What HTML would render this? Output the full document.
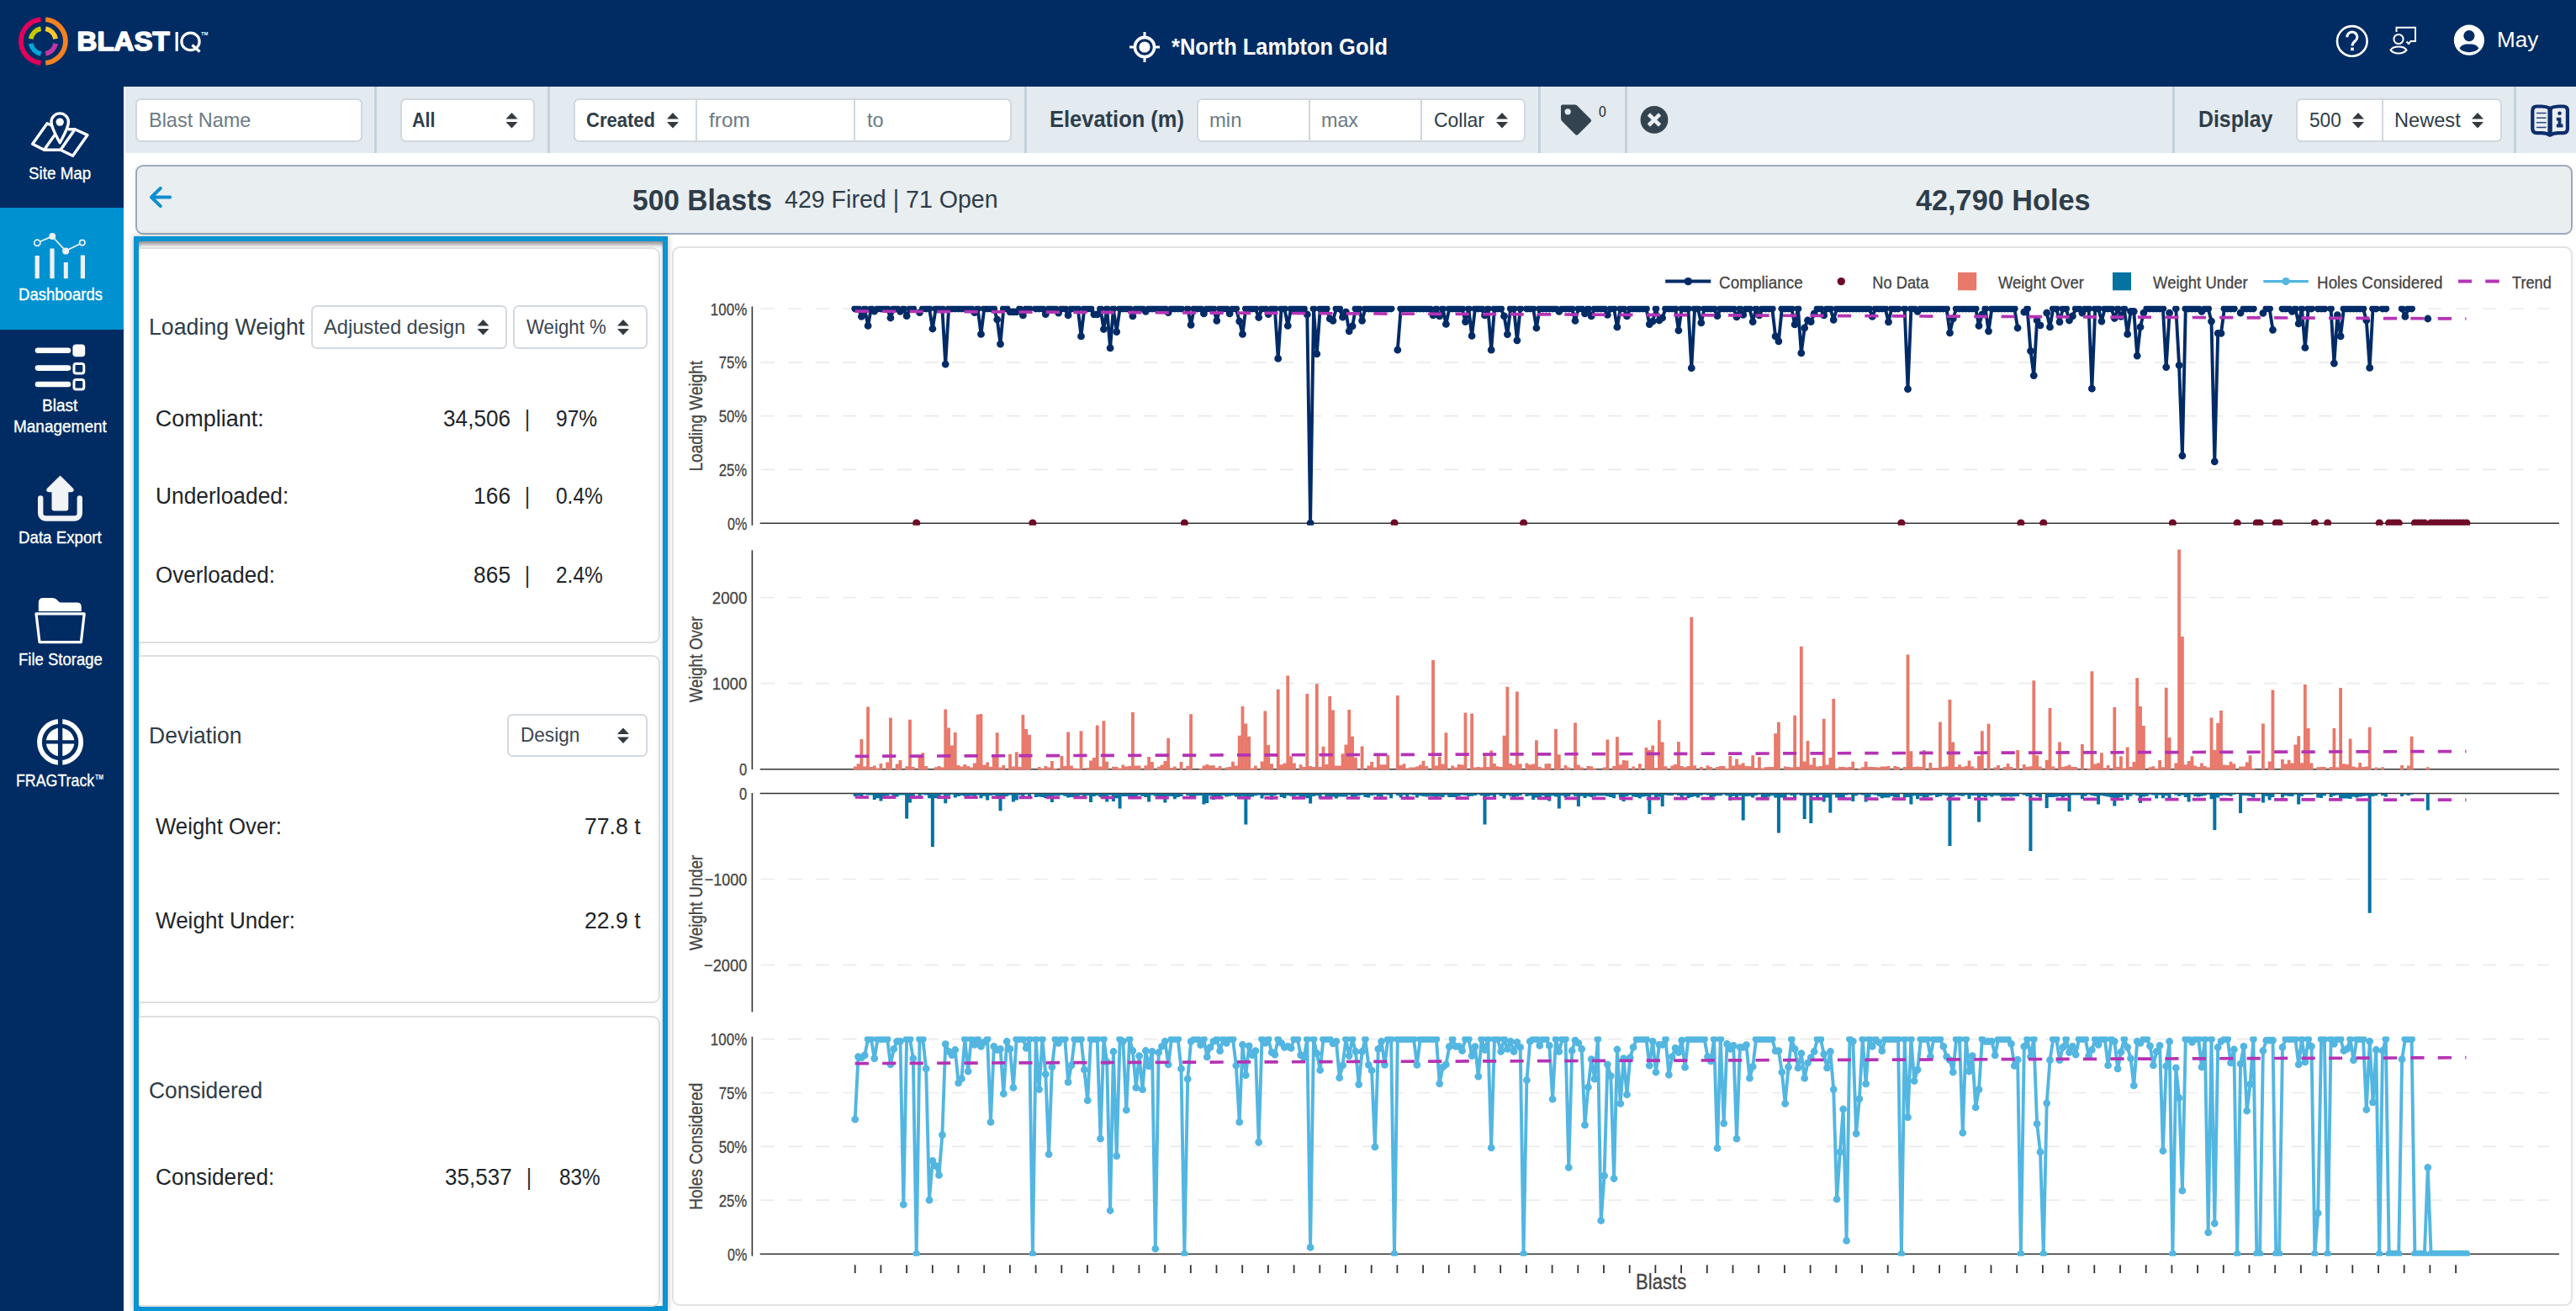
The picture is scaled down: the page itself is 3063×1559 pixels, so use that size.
<!DOCTYPE html>
<html lang="en"><head><meta charset="utf-8"><title>BlastIQ - Dashboards</title>
<style>
html,body{margin:0;padding:0}
body{width:3063px;height:1559px;overflow:hidden;position:relative;background:#fff;font-family:"Liberation Sans",sans-serif}
.abs{position:absolute}
.t{position:absolute;white-space:nowrap;line-height:1;transform-origin:0 0;display:block}
#hdr{position:absolute;left:0;top:0;width:3063px;height:102.600px;background:#002b63}
#side{position:absolute;left:0;top:102px;width:147px;height:1457px;background:#002b63}
#fbar{position:absolute;left:149px;top:102.600px;width:2914px;height:79.400px;background:#e3eaf0}
.sep{position:absolute;top:102.600px;width:3px;height:79.400px;background:#c3d2db}
.inp{position:absolute;top:116.800px;height:52.200px;box-sizing:border-box;background:#fff;border:2px solid #d0d7de;border-radius:6.500px}
.vdiv{position:absolute;top:118px;height:50px;width:2px;background:#d0d7de}
#sum{position:absolute;left:161px;top:196px;width:2898px;height:82.500px;box-sizing:border-box;background:#e9eef1;border:2px solid #9aaabd;border-radius:9px}
#selp{position:absolute;left:159px;top:281.300px;width:635px;height:1277.700px;box-sizing:border-box;border:6px solid #0993d3;background:#fff;box-shadow:inset 0 7px 5px -3px rgba(0,0,0,.42), inset 4px 0 4px -3px rgba(0,0,0,.14), inset -4px 0 4px -3px rgba(0,0,0,.14), 0 0 7px rgba(0,0,0,.28)}
.card{position:absolute;box-sizing:border-box;background:#fff;border:2px solid #dfdfdf;border-left:0;border-radius:3px 9px 9px 3px}
.sel{position:absolute;box-sizing:border-box;background:#fff;border:2px solid #d3d9df;border-radius:6.500px}
#chart{position:absolute;left:799.200px;top:293.300px;width:2260px;height:1260.200px;box-sizing:border-box;background:#fff;border:2px solid #e2e2e2;border-radius:9px}
</style></head>
<body>
<div id="hdr">
<svg class="abs" style="left:0;top:0" width="300" height="102" viewBox="0 0 300 102">
<g fill="none" stroke-width="5.8">
<path d="M48.6 23.1A26 26 0 0 0 48.6 74.9" stroke="#e2005a"/>
<path d="M54.2 23.1A26 26 0 0 1 54.2 74.9" stroke="#f58220"/>
<path d="M48.6 34.2A15 15 0 0 0 36.7 46.2" stroke="#c6c800"/>
<path d="M54.2 34.2A15 15 0 0 1 66.1 46.2" stroke="#fdc82f"/>
<path d="M36.7 51.8A15 15 0 0 0 48.6 63.8" stroke="#00a5d9"/>
<path d="M66.1 51.8A15 15 0 0 1 54.2 63.8" stroke="#c137a2"/>
</g>
<text x="91.6" y="60.1" font-family="Liberation Sans, sans-serif" font-weight="700" font-size="31.300" fill="#fff" stroke="#fff" stroke-width="1.600" stroke-linejoin="round" textLength="110" lengthAdjust="spacingAndGlyphs">BLAST</text>
<g fill="none" stroke="#fff" stroke-width="3.2">
<path d="M210.2 38V60.8"/>
<ellipse cx="226.5" cy="49.4" rx="10.6" ry="10.2"/>
<path d="M228.5 53.5L237.5 61.5" stroke-width="3.4"/>
</g>
<text x="239.3" y="42" font-family="Liberation Sans, sans-serif" font-weight="700" font-size="5.5" fill="#fff">TM</text>
</svg>
<svg class="abs" style="left:1336px;top:30px" width="50" height="52" viewBox="1336 30 50 52">
<circle cx="1361" cy="56" r="11.6" fill="none" stroke="#fff" stroke-width="3.6"/>
<circle cx="1361" cy="56" r="6.6" fill="#fff"/>
<path d="M1361 38v7M1361 67v7M1343 56h7M1372 56h7" stroke="#fff" stroke-width="3"/>
</svg>
<span class="t" style="left:1393.4px;top:42.8px;font-size:27px;color:#fff;font-weight:700;transform:scaleX(0.9415);">*North Lambton Gold</span>
<svg class="abs" style="left:2770px;top:20px" width="120" height="60" viewBox="2770 20 120 60">
<circle cx="2796.8" cy="48.9" r="17.8" fill="none" stroke="#fff" stroke-width="2.6"/>
<path d="M2790.8 44.2a6 6 0 1 1 9.6 4.6c-2.4 1.8-3.4 2.8-3.4 5.6" fill="none" stroke="#fff" stroke-width="3"/>
<rect x="2795.2" y="56.6" width="3.6" height="3.6" fill="#fff"/>
<g fill="none" stroke="#fff" stroke-width="2">
<path d="M2849.5 38V32.8H2872V49H2866.5L2864 52L2861.5 49.5"/>
<circle cx="2852" cy="46.5" r="5.6"/>
<path d="M2842.5 59.5C2845 55.5 2849 55.5 2852 55.5C2855 55.5 2859 55.5 2861.5 59.5C2859 62.5 2856 63.5 2852 63.5C2848 63.5 2845 62.5 2842.5 59.5Z"/>
</g>
</svg>
<svg class="abs" style="left:2915px;top:27px" width="44" height="44" viewBox="2915 27 44 44">
<circle cx="2935.9" cy="47.7" r="18.1" fill="#fff"/>
<circle cx="2935.9" cy="42.6" r="6.6" fill="#002b63"/>
<path d="M2924.4 57.6C2927 52.8 2931.5 52.6 2935.9 52.6C2940.3 52.6 2944.8 52.8 2947.4 57.6C2944.5 61 2940.5 62.2 2935.9 62.2C2931.3 62.2 2927.3 61 2924.4 57.6Z" fill="#002b63"/>
</svg>
<span class="t" style="left:2968.7px;top:34.4px;font-size:26.5px;color:#fff;transform:scaleX(0.9847);">May</span>
</div>
<div id="side">
<div class="abs" style="left:0px;top:145px;width:147px;height:145px;background:#0091d1;"></div>
</div>
<svg class="abs" style="left:0;top:102px" width="148" height="900" viewBox="0 102 148 900">
<!-- site map -->
<g fill="none" stroke="#fff" stroke-width="3.4" stroke-linejoin="round" stroke-linecap="round">
<path d="M61.5 149.2L56.1 146.8L38.700 171.3L52.5 178.2H72L86.6 185.3L104 160.6L89.1 153.8H81.5"/>
<path d="M52.5 178.2L65 160.500M72 178.2L89.1 153.8"/>
<path d="M71.2 169.800C66 160 61 152 61 145.100A10.2 10.2 0 0 1 81.4 145.100C81.400 152 76.400 160 71.2 169.800Z" fill="#002b63"/>
</g>
<circle cx="71.2" cy="145.100" r="4.700" fill="#fff"/>
<!-- dashboards -->
<g fill="#eef1f4">
<rect x="41.6" y="304" width="5.2" height="27.2"/>
<rect x="59.4" y="295.5" width="5.2" height="35.7"/>
<rect x="75.8" y="312" width="5" height="19.2"/>
<rect x="95.8" y="303.5" width="5.2" height="27.7"/>
<circle cx="62.3" cy="281" r="3.9"/>
<circle cx="78.2" cy="298.6" r="4.1"/>
</g>
<g fill="none" stroke="#eef1f4" stroke-width="1.7">
<circle cx="44.3" cy="288.8" r="3.6"/>
<circle cx="97.8" cy="288.6" r="3.2"/>
<path d="M47.6 287.2L59 282.4M64.8 284L75.6 295.6M81.8 296.6L94.8 290.2"/>
</g>
<!-- blast management -->
<g stroke="#fff" stroke-width="6.6" stroke-linecap="round">
<path d="M45 416.8H81M45 437.6H81M45 457H81"/>
</g>
<rect x="86.4" y="409.4" width="14.8" height="14.9" rx="4" fill="#fff"/>
<rect x="88" y="432.6" width="11.8" height="11.4" rx="2.6" fill="none" stroke="#fff" stroke-width="3"/>
<rect x="88" y="451.6" width="11.8" height="11.4" rx="2.6" fill="none" stroke="#fff" stroke-width="3"/>
<!-- data export -->
<path d="M48.2 592.5V610.5A6 6 0 0 0 54.2 616.5H88.8A6 6 0 0 0 94.8 610.5V592.5" fill="none" stroke="#f1f3f5" stroke-width="6.4" stroke-linecap="round"/>
<path d="M71.6 566.6L86.6 581.6Q87.8 584.4 85 584.4H80.5V604.5Q80.5 606.6 78.4 606.6H64.4Q62.3 606.6 62.3 604.5V584.4H58Q55 584.4 56.4 581.6Z" fill="#f1f3f5" stroke="#f1f3f5" stroke-width="1.6" stroke-linejoin="round"/>
<!-- file storage -->
<path d="M45.8 726.9V716.5Q45.8 710.9 51.4 710.9H62.5Q66 710.9 68 713.5Q70 716.6 73.5 716.6H91.5Q96.8 716.6 96.8 722V726.9Z" fill="#fff"/>
<path d="M43 729.8H100.2L96.4 763.6H47Z" fill="none" stroke="#fff" stroke-width="3.2" stroke-linejoin="round"/>
<!-- fragtrack -->
<circle cx="71.6" cy="882.4" r="24.6" fill="none" stroke="#fff" stroke-width="5.8"/>
<circle cx="71.6" cy="882.4" r="16.8" fill="#fff"/>
<path d="M71.6 852V913" stroke="#002b63" stroke-width="5.4"/>
<path d="M52 882.4H91" stroke="#002b63" stroke-width="4.4"/>
</svg>
<span class="t" style="left:34.2px;top:194.9px;font-size:21px;color:#fff;transform:scaleX(0.8965);-webkit-text-stroke:.35px #fff;">Site Map</span>
<span class="t" style="left:21.5px;top:339.0px;font-size:21px;color:#fff;transform:scaleX(0.8831);-webkit-text-stroke:.35px #fff;">Dashboards</span>
<span class="t" style="left:50.3px;top:471.4px;font-size:21px;color:#fff;transform:scaleX(0.9060);-webkit-text-stroke:.35px #fff;">Blast</span>
<span class="t" style="left:16.0px;top:495.9px;font-size:21px;color:#fff;transform:scaleX(0.9039);-webkit-text-stroke:.35px #fff;">Management</span>
<span class="t" style="left:22.2px;top:628.2px;font-size:21px;color:#fff;transform:scaleX(0.8910);-webkit-text-stroke:.35px #fff;">Data Export</span>
<span class="t" style="left:21.5px;top:773.0px;font-size:21px;color:#fff;transform:scaleX(0.8814);-webkit-text-stroke:.35px #fff;">File Storage</span>
<span class="t" style="left:19.4px;top:917.4px;font-size:21px;color:#fff;transform:scaleX(0.8468);-webkit-text-stroke:.35px #fff;">FRAGTrack</span>
<span class="t" style="left:112.8px;top:920.3px;font-size:8.5px;color:#fff;font-weight:700;transform:scaleX(0.8148);">TM</span>
<div id="fbar"></div>
<div class="sep" style="left:445px"></div>
<div class="sep" style="left:651px"></div>
<div class="sep" style="left:1217.5px"></div>
<div class="sep" style="left:1829px"></div>
<div class="sep" style="left:1932px"></div>
<div class="sep" style="left:2583px"></div>
<div class="sep" style="left:2989px"></div>
<div class="inp" style="left:161.4px;width:269.4px;"></div>
<span class="t" style="left:177.2px;top:130.9px;font-size:24px;color:#6c7a86;transform:scaleX(0.9779);">Blast Name</span>
<div class="inp" style="left:475.6px;width:160.79999999999995px;"></div>
<span class="t" style="left:490.3px;top:130.9px;font-size:24px;color:#2e3d49;font-weight:700;transform:scaleX(0.8935);">All</span>
<div class="inp" style="left:681.6px;width:521.6px;"></div>
<div class="vdiv" style="left:827px"></div><div class="vdiv" style="left:1014.8px"></div>
<span class="t" style="left:696.8px;top:130.9px;font-size:24px;color:#2e3d49;font-weight:700;transform:scaleX(0.9175);">Created</span>
<span class="t" style="left:843.0px;top:130.9px;font-size:24px;color:#6c7a86;transform:scaleX(1.0166);">from</span>
<span class="t" style="left:1030.6px;top:130.9px;font-size:24px;color:#6c7a86;transform:scaleX(0.9792);">to</span>
<span class="t" style="left:1248.4px;top:128.8px;font-size:27px;color:#2e3d49;font-weight:700;transform:scaleX(0.9438);">Elevation (m)</span>
<div class="inp" style="left:1422.6px;width:391.8000000000002px;"></div>
<div class="vdiv" style="left:1555.8px"></div><div class="vdiv" style="left:1689px"></div>
<span class="t" style="left:1438.0px;top:130.9px;font-size:24px;color:#6c7a86;transform:scaleX(0.9929);">min</span>
<span class="t" style="left:1571.0px;top:130.9px;font-size:24px;color:#6c7a86;transform:scaleX(0.9704);">max</span>
<span class="t" style="left:1704.7px;top:130.9px;font-size:24px;color:#2e3d49;transform:scaleX(0.9571);">Collar</span>
<span class="t" style="left:2613.6px;top:128.8px;font-size:27px;color:#2e3d49;font-weight:700;transform:scaleX(0.9194);">Display</span>
<div class="inp" style="left:2729.7px;width:245.30000000000018px;"></div>
<div class="vdiv" style="left:2832px"></div>
<span class="t" style="left:2745.6px;top:130.9px;font-size:24px;color:#2e3d49;transform:scaleX(0.9440);">500</span>
<span class="t" style="left:2847.0px;top:130.9px;font-size:24px;color:#2e3d49;transform:scaleX(0.9834);">Newest</span>
<span class="t" style="left:1901.0px;top:125.0px;font-size:17.5px;color:#212529;transform:scaleX(0.9041);">0</span>
<svg class="abs" style="left:148px;top:102px" width="2915" height="80" viewBox="148 102 2915 80">
<path d="M601.5 141.6L608.5 134.1L615.5 141.6ZM601.5 145.1L608.5 152.6L615.5 145.1Z" fill="#343a40"/><path d="M793.0 141.6L800.0 134.1L807.0 141.6ZM793.0 145.1L800.0 152.6L807.0 145.1Z" fill="#343a40"/><path d="M1779.0 141.6L1786.0 134.1L1793.0 141.6ZM1779.0 145.1L1786.0 152.6L1793.0 145.1Z" fill="#343a40"/><path d="M2797.0 141.6L2804.0 134.1L2811.0 141.6ZM2797.0 145.1L2804.0 152.6L2811.0 145.1Z" fill="#343a40"/><path d="M2939.0 141.6L2946.0 134.1L2953.0 141.6ZM2939.0 145.1L2946.0 152.6L2953.0 145.1Z" fill="#343a40"/>
<path d="M1856 126.5Q1856 124.5 1858 124.5H1872.5Q1874.2 124.5 1875.4 125.7L1891.4 141.7Q1893 143.3 1891.4 144.9L1876.4 159.9Q1874.8 161.5 1873.2 159.9L1857.2 143.9Q1856 142.7 1856 141Z" fill="#33434f"/>
<circle cx="1864.2" cy="132.8" r="3.6" fill="#e3eaf0"/>
<circle cx="1967" cy="142.4" r="16.4" fill="#33434f"/>
<path d="M1960.4 135.8L1973.6 149M1973.6 135.8L1960.4 149" stroke="#e9eef2" stroke-width="4.6"/>
<path d="M3011.3 131.5Q3011.3 126.5 3016.3 126.5H3022Q3028 126.5 3032.1 128.800Q3036.2 126.5 3042.2 126.5H3047.9Q3052.9 126.5 3052.9 131.5V153.100Q3052.9 158.100 3047.9 158.100H3042.2Q3036.2 158.100 3032.1 160.800Q3028 158.100 3022 158.100H3016.3Q3011.3 158.100 3011.3 153.100Z" fill="#e9eef2" stroke="#0d2d6b" stroke-width="4.2" stroke-linejoin="round"/>
<path d="M3032.1 128V161.500" stroke="#0d2d6b" stroke-width="5.400"/>
<path d="M3016.5 134.5H3027.1M3016.500 140.2H3027.100M3016.5 145.700H3027.1M3016.500 151.500H3027.100" stroke="#2a4680" stroke-width="1.500" stroke-linecap="round"/>
<circle cx="3043.5" cy="134.700" r="2.300" fill="#0d2d6b"/>
<path d="M3040.5 140.300H3044.8V148.200H3046.900V150.800H3040.500V148.200H3042.200V142.900H3040.500Z" fill="#0d2d6b" stroke="#0d2d6b" stroke-width="1.2" stroke-linejoin="round"/>
</svg>
<div id="sum"></div>
<svg class="abs" style="left:170px;top:215px" width="44" height="40" viewBox="170 215 44 40">
<path d="M202.200 234.500H180.200M190.800 223.900L180 234.500L190.800 245.100" fill="none" stroke="#0d8fd0" stroke-width="4" stroke-linecap="round" stroke-linejoin="round"/></svg>
<span class="t" style="left:751.5px;top:220.2px;font-size:35px;color:#2e3d49;font-weight:700;transform:scaleX(0.9586);">500 Blasts</span>
<span class="t" style="left:932.7px;top:222.2px;font-size:30px;color:#2e3d49;transform:scaleX(0.9523);">429 Fired | 71 Open</span>
<span class="t" style="left:2277.5px;top:220.2px;font-size:35px;color:#2e3d49;font-weight:700;transform:scaleX(0.9788);">42,790 Holes</span>
<div id="selp"></div>
<div class="card" style="left:165px;top:293.5px;width:620px;height:471px"></div>
<div class="card" style="left:165px;top:779px;width:620px;height:413.500px"></div>
<div class="card" style="left:165px;top:1208px;width:620px;height:345.500px"></div>
<span class="t" style="left:176.9px;top:375.1px;font-size:28px;color:#2e3d49;transform:scaleX(0.9543);">Loading Weight</span>
<div class="sel" style="left:369.8px;top:363.4px;width:232.99999999999994px;height:51.200000000000045px"></div>
<span class="t" style="left:385.2px;top:376.5px;font-size:24px;color:#3a4650;transform:scaleX(0.9854);">Adjusted design</span>
<div class="sel" style="left:610.4px;top:363.4px;width:159.20000000000005px;height:51.200000000000045px"></div>
<span class="t" style="left:626.0px;top:376.5px;font-size:24px;color:#3a4650;transform:scaleX(0.9270);">Weight %</span>
<span class="t" style="left:184.7px;top:484.5px;font-size:27px;color:#212529;">Compliant:</span>
<span class="t" style="left:526.5px;top:484.5px;font-size:27px;color:#212529;transform:scaleX(0.9699);">34,506</span>
<span class="t" style="left:623.6px;top:484.5px;font-size:27px;color:#212529;transform:scaleX(0.8555);">|</span>
<span class="t" style="left:660.8px;top:484.5px;font-size:27px;color:#212529;transform:scaleX(0.9104);">97%</span>
<span class="t" style="left:184.7px;top:577.4px;font-size:27px;color:#212529;transform:scaleX(0.9764);">Underloaded:</span>
<span class="t" style="left:562.5px;top:577.4px;font-size:27px;color:#212529;transform:scaleX(0.9789);">166</span>
<span class="t" style="left:623.6px;top:577.4px;font-size:27px;color:#212529;transform:scaleX(0.8555);">|</span>
<span class="t" style="left:660.8px;top:577.4px;font-size:27px;color:#212529;transform:scaleX(0.9067);">0.4%</span>
<span class="t" style="left:184.7px;top:670.9px;font-size:27px;color:#212529;transform:scaleX(0.9661);">Overloaded:</span>
<span class="t" style="left:562.5px;top:670.9px;font-size:27px;color:#212529;transform:scaleX(0.9789);">865</span>
<span class="t" style="left:623.6px;top:670.9px;font-size:27px;color:#212529;transform:scaleX(0.8555);">|</span>
<span class="t" style="left:660.8px;top:670.9px;font-size:27px;color:#212529;transform:scaleX(0.9067);">2.4%</span>
<span class="t" style="left:176.8px;top:860.6px;font-size:28px;color:#2e3d49;transform:scaleX(0.9466);">Deviation</span>
<div class="sel" style="left:603px;top:849px;width:166.60000000000002px;height:51.39999999999998px"></div>
<span class="t" style="left:619.2px;top:862.3px;font-size:24px;color:#3a4650;transform:scaleX(0.9410);">Design</span>
<span class="t" style="left:185.4px;top:970.2px;font-size:27px;color:#212529;transform:scaleX(0.9551);">Weight Over:</span>
<span class="t" style="left:695.0px;top:970.2px;font-size:27px;color:#212529;transform:scaleX(0.9859);">77.8 t</span>
<span class="t" style="left:185.4px;top:1081.7px;font-size:27px;color:#212529;transform:scaleX(0.9652);">Weight Under:</span>
<span class="t" style="left:695.0px;top:1081.7px;font-size:27px;color:#212529;transform:scaleX(0.9859);">22.9 t</span>
<span class="t" style="left:176.7px;top:1282.7px;font-size:28px;color:#2e3d49;transform:scaleX(0.9434);">Considered</span>
<span class="t" style="left:185.2px;top:1386.7px;font-size:27px;color:#212529;transform:scaleX(0.9705);">Considered:</span>
<span class="t" style="left:528.6px;top:1386.7px;font-size:27px;color:#212529;transform:scaleX(0.9639);">35,537</span>
<span class="t" style="left:625.5px;top:1386.7px;font-size:27px;color:#212529;transform:scaleX(0.8555);">|</span>
<span class="t" style="left:665.0px;top:1386.7px;font-size:27px;color:#212529;transform:scaleX(0.9012);">83%</span>
<svg class="abs" style="left:165px;top:290px" width="625" height="700" viewBox="165 290 625 700">
<path d="M567.5 387.4L574.5 379.9L581.5 387.4ZM567.5 390.9L574.5 398.4L581.5 390.9Z" fill="#343a40"/><path d="M734.0 387.4L741.0 379.9L748.0 387.4ZM734.0 390.9L741.0 398.4L748.0 390.9Z" fill="#343a40"/><path d="M734.0 873.0L741.0 865.5L748.0 873.0ZM734.0 876.5L741.0 884.0L748.0 876.5Z" fill="#343a40"/></svg>
<div id="chart"></div>
<svg id="chsvg" class="abs" style="left:800px;top:294px" width="2258" height="1258" viewBox="800 294 2258 1258" font-family="Liberation Sans, sans-serif"><style>#chsvg text{stroke:#444;stroke-width:.3px}</style>
<defs><clipPath id="c1"><rect x="900" y="363.8" width="2150" height="260.9"/></clipPath><clipPath id="c4"><rect x="900" y="1232.5" width="2150" height="261.2"/></clipPath></defs>
<path d="M904.6 367.0H3031M904.6 430.8H3031M904.6 494.6H3031M904.6 558.3H3031M904.6 710.5H3031M904.6 812.6H3031M904.6 1045.5H3031M904.6 1147.6H3031M904.6 1235.7H3031M904.6 1299.5H3031M904.6 1363.4H3031M904.6 1427.2H3031" stroke="#ebebeb" stroke-width="1.700" stroke-dasharray="16.4 16.1" fill="none"/>
<path d="M903.7 622.3H3043M903.7 914.8H3043M903.7 943.6H3043M903.7 1491.3H3043" stroke="#333" stroke-width="1.500" fill="none"/>
<path d="M894.4 364.4V624.7M894.4 654.2V915M894.4 943V1203.5M894.4 1232.8V1493.7" stroke="#333" stroke-width="1.600" fill="none"/>
<path d="M1016.7 1504.3V1514M1047.4 1504.3V1514M1078.1 1504.3V1514M1108.8 1504.3V1514M1139.5 1504.3V1514M1170.2 1504.3V1514M1200.9 1504.3V1514M1231.6 1504.3V1514M1262.3 1504.3V1514M1293.0 1504.3V1514M1323.7 1504.3V1514M1354.4 1504.3V1514M1385.1 1504.3V1514M1415.8 1504.3V1514M1446.5 1504.3V1514M1477.2 1504.3V1514M1507.9 1504.3V1514M1538.6 1504.3V1514M1569.3 1504.3V1514M1600.0 1504.3V1514M1630.7 1504.3V1514M1661.4 1504.3V1514M1692.1 1504.3V1514M1722.8 1504.3V1514M1753.5 1504.3V1514M1784.2 1504.3V1514M1814.9 1504.3V1514M1845.6 1504.3V1514M1876.3 1504.3V1514M1907.0 1504.3V1514M1937.7 1504.3V1514M1968.4 1504.3V1514M1999.1 1504.3V1514M2029.8 1504.3V1514M2060.5 1504.3V1514M2091.2 1504.3V1514M2121.9 1504.3V1514M2152.6 1504.3V1514M2183.3 1504.3V1514M2214.0 1504.3V1514M2244.7 1504.3V1514M2275.4 1504.3V1514M2306.1 1504.3V1514M2336.8 1504.3V1514M2367.5 1504.3V1514M2398.2 1504.3V1514M2428.9 1504.3V1514M2459.6 1504.3V1514M2490.3 1504.3V1514M2521.0 1504.3V1514M2551.7 1504.3V1514M2582.4 1504.3V1514M2613.1 1504.3V1514M2643.8 1504.3V1514M2674.5 1504.3V1514M2705.2 1504.3V1514M2735.9 1504.3V1514M2766.6 1504.3V1514M2797.3 1504.3V1514M2828.0 1504.3V1514M2858.7 1504.3V1514M2889.4 1504.3V1514M2920.1 1504.3V1514" stroke="#333" stroke-width="1.800" fill="none"/>
<text x="844.8" y="374.6" font-size="21" fill="#444"  textLength="43.5" lengthAdjust="spacingAndGlyphs" >100%</text>
<text x="844.8" y="1243.3" font-size="21" fill="#444"  textLength="43.5" lengthAdjust="spacingAndGlyphs" >100%</text>
<text x="854.7" y="438.4" font-size="21" fill="#444"  textLength="33.6" lengthAdjust="spacingAndGlyphs" >75%</text>
<text x="854.7" y="1307.1" font-size="21" fill="#444"  textLength="33.6" lengthAdjust="spacingAndGlyphs" >75%</text>
<text x="854.7" y="502.2" font-size="21" fill="#444"  textLength="33.6" lengthAdjust="spacingAndGlyphs" >50%</text>
<text x="854.7" y="1371.0" font-size="21" fill="#444"  textLength="33.6" lengthAdjust="spacingAndGlyphs" >50%</text>
<text x="854.7" y="565.9" font-size="21" fill="#444"  textLength="33.6" lengthAdjust="spacingAndGlyphs" >25%</text>
<text x="854.7" y="1434.8" font-size="21" fill="#444"  textLength="33.6" lengthAdjust="spacingAndGlyphs" >25%</text>
<text x="864.9" y="629.7" font-size="21" fill="#444"  textLength="23.4" lengthAdjust="spacingAndGlyphs" >0%</text>
<text x="864.9" y="1498.7" font-size="21" fill="#444"  textLength="23.4" lengthAdjust="spacingAndGlyphs" >0%</text>
<text x="846.8" y="718.1" font-size="21" fill="#444"  textLength="41.5" lengthAdjust="spacingAndGlyphs" >2000</text>
<text x="846.8" y="820.2" font-size="21" fill="#444"  textLength="41.5" lengthAdjust="spacingAndGlyphs" >1000</text>
<text x="879.1" y="922.2" font-size="21" fill="#444"  textLength="9.2" lengthAdjust="spacingAndGlyphs" >0</text>
<text x="879.1" y="951.0" font-size="21" fill="#444"  textLength="9.2" lengthAdjust="spacingAndGlyphs" >0</text>
<text x="837.7" y="1053.1" font-size="21" fill="#444"  textLength="50.6" lengthAdjust="spacingAndGlyphs" >−1000</text>
<text x="837.0" y="1155.2" font-size="21" fill="#444"  textLength="51.3" lengthAdjust="spacingAndGlyphs" >−2000</text>
<text x="835.3" y="494.7" font-size="22.5" fill="#444" text-anchor="middle" textLength="131.5" lengthAdjust="spacingAndGlyphs" transform="rotate(-90 835.3 494.7)">Loading Weight</text>
<text x="835.3" y="784.0" font-size="22.5" fill="#444" text-anchor="middle" textLength="102.5" lengthAdjust="spacingAndGlyphs" transform="rotate(-90 835.3 784.0)">Weight Over</text>
<text x="835.3" y="1073.5" font-size="22.5" fill="#444" text-anchor="middle" textLength="113.5" lengthAdjust="spacingAndGlyphs" transform="rotate(-90 835.3 1073.5)">Weight Under</text>
<text x="835.3" y="1363.2" font-size="22.5" fill="#444" text-anchor="middle" textLength="151" lengthAdjust="spacingAndGlyphs" transform="rotate(-90 835.3 1363.2)">Holes Considered</text>
<text x="1945" y="1532.5" font-size="25.5" fill="#444" textLength="60.2" lengthAdjust="spacingAndGlyphs">Blasts</text>
<path d="M1980.2 334.6H2034.3" stroke="#002b66" stroke-width="4"/><circle cx="2007.3" cy="334.6" r="4.7" fill="#002b66"/>
<text x="2044.1" y="342.6" font-size="20.6" fill="#444"  textLength="99.6" lengthAdjust="spacingAndGlyphs" >Compliance</text>
<circle cx="2189.3" cy="334.6" r="4.7" fill="#6e0b27"/>
<text x="2226.3" y="342.6" font-size="20.6" fill="#444"  textLength="67.0" lengthAdjust="spacingAndGlyphs" >No Data</text>
<rect x="2328" y="323.9" width="22.2" height="21.4" fill="#e8796b"/>
<text x="2375.9" y="342.6" font-size="20.6" fill="#444"  textLength="102.0" lengthAdjust="spacingAndGlyphs" >Weight Over</text>
<rect x="2512" y="323.9" width="22" height="21.4" fill="#0473a2"/>
<text x="2560.1" y="342.6" font-size="20.6" fill="#444"  textLength="112.6" lengthAdjust="spacingAndGlyphs" >Weight Under</text>
<path d="M2691.3 334.6H2744.8" stroke="#53b6e1" stroke-width="3.4"/><circle cx="2718" cy="334.6" r="4.6" fill="#53b6e1"/>
<text x="2755.1" y="342.6" font-size="20.6" fill="#444"  textLength="149.3" lengthAdjust="spacingAndGlyphs" >Holes Considered</text>
<path d="M2923 334.6H2939M2955.3 334.6H2971.7" stroke="#b533b5" stroke-width="4"/>
<text x="2987.0" y="342.6" font-size="20.6" fill="#444"  textLength="46.8" lengthAdjust="spacingAndGlyphs" >Trend</text>
<path d="M1014.80 915.2V911.5h3.8V915.2ZM1018.64 915.2V908.2h3.8V915.2ZM1022.48 915.2V878.9h3.8V915.2ZM1026.32 915.2V911.5h3.8V915.2ZM1030.16 915.2V840.5h3.8V915.2ZM1034.00 915.2V911.9h3.8V915.2ZM1037.84 915.2V910.5h3.8V915.2ZM1041.68 915.2V913.4h3.8V915.2ZM1045.52 915.2V908.0h3.8V915.2ZM1053.20 915.2V906.4h3.8V915.2ZM1057.04 915.2V853.6h3.8V915.2ZM1064.72 915.2V908.5h3.8V915.2ZM1068.56 915.2V903.9h3.8V915.2ZM1076.24 915.2V911.2h3.8V915.2ZM1080.08 915.2V855.7h3.8V915.2ZM1083.92 915.2V912.0h3.8V915.2ZM1091.60 915.2V899.3h3.8V915.2ZM1095.44 915.2V895.2h3.8V915.2ZM1099.28 915.2V911.1h3.8V915.2ZM1110.80 915.2V912.3h3.8V915.2ZM1114.64 915.2V911.1h3.8V915.2ZM1118.48 915.2V912.6h3.8V915.2ZM1122.32 915.2V843.4h3.8V915.2ZM1126.16 915.2V865.5h3.8V915.2ZM1130.00 915.2V886.6h3.8V915.2ZM1133.84 915.2V871.0h3.8V915.2ZM1137.68 915.2V910.0h3.8V915.2ZM1141.52 915.2V911.5h3.8V915.2ZM1145.36 915.2V909.0h3.8V915.2ZM1149.20 915.2V911.0h3.8V915.2ZM1153.04 915.2V912.6h3.8V915.2ZM1156.88 915.2V907.5h3.8V915.2ZM1160.72 915.2V849.7h3.8V915.2ZM1164.56 915.2V849.1h3.8V915.2ZM1168.40 915.2V909.5h3.8V915.2ZM1172.24 915.2V906.4h3.8V915.2ZM1176.08 915.2V911.9h3.8V915.2ZM1179.92 915.2V900.3h3.8V915.2ZM1183.76 915.2V871.2h3.8V915.2ZM1187.60 915.2V912.6h3.8V915.2ZM1191.44 915.2V910.0h3.8V915.2ZM1199.12 915.2V896.8h3.8V915.2ZM1202.96 915.2V911.5h3.8V915.2ZM1206.80 915.2V894.2h3.8V915.2ZM1210.64 915.2V911.9h3.8V915.2ZM1214.48 915.2V850.1h3.8V915.2ZM1218.32 915.2V866.9h3.8V915.2ZM1222.16 915.2V873.8h3.8V915.2ZM1233.68 915.2V911.9h3.8V915.2ZM1237.52 915.2V913.4h3.8V915.2ZM1241.36 915.2V911.0h3.8V915.2ZM1245.20 915.2V912.6h3.8V915.2ZM1249.04 915.2V905.0h3.8V915.2ZM1252.88 915.2V913.8h3.8V915.2ZM1260.56 915.2V898.9h3.8V915.2ZM1264.40 915.2V911.1h3.8V915.2ZM1268.24 915.2V870.6h3.8V915.2ZM1272.08 915.2V910.5h3.8V915.2ZM1275.92 915.2V913.4h3.8V915.2ZM1279.76 915.2V913.8h3.8V915.2ZM1283.60 915.2V869.2h3.8V915.2ZM1291.28 915.2V913.0h3.8V915.2ZM1295.12 915.2V904.4h3.8V915.2ZM1298.96 915.2V900.9h3.8V915.2ZM1302.80 915.2V862.5h3.8V915.2ZM1306.64 915.2V911.5h3.8V915.2ZM1310.48 915.2V857.3h3.8V915.2ZM1314.32 915.2V905.4h3.8V915.2ZM1322.00 915.2V911.7h3.8V915.2ZM1325.84 915.2V911.9h3.8V915.2ZM1329.68 915.2V913.4h3.8V915.2ZM1333.52 915.2V909.5h3.8V915.2ZM1337.36 915.2V911.5h3.8V915.2ZM1341.20 915.2V911.1h3.8V915.2ZM1345.04 915.2V847.0h3.8V915.2ZM1348.88 915.2V910.5h3.8V915.2ZM1352.72 915.2V910.5h3.8V915.2ZM1360.40 915.2V910.2h3.8V915.2ZM1364.24 915.2V899.9h3.8V915.2ZM1368.08 915.2V906.0h3.8V915.2ZM1375.76 915.2V911.7h3.8V915.2ZM1379.60 915.2V909.5h3.8V915.2ZM1383.44 915.2V905.0h3.8V915.2ZM1387.28 915.2V877.8h3.8V915.2ZM1391.12 915.2V913.0h3.8V915.2ZM1394.96 915.2V911.5h3.8V915.2ZM1402.64 915.2V906.0h3.8V915.2ZM1410.32 915.2V911.0h3.8V915.2ZM1414.16 915.2V849.3h3.8V915.2ZM1425.68 915.2V913.8h3.8V915.2ZM1429.52 915.2V910.5h3.8V915.2ZM1433.36 915.2V909.0h3.8V915.2ZM1437.20 915.2V910.2h3.8V915.2ZM1441.04 915.2V910.2h3.8V915.2ZM1444.88 915.2V913.0h3.8V915.2ZM1448.72 915.2V911.0h3.8V915.2ZM1456.40 915.2V912.6h3.8V915.2ZM1460.24 915.2V911.9h3.8V915.2ZM1464.08 915.2V905.8h3.8V915.2ZM1467.92 915.2V910.5h3.8V915.2ZM1471.76 915.2V874.7h3.8V915.2ZM1475.60 915.2V840.1h3.8V915.2ZM1479.44 915.2V860.4h3.8V915.2ZM1483.28 915.2V875.7h3.8V915.2ZM1487.12 915.2V913.4h3.8V915.2ZM1490.96 915.2V910.5h3.8V915.2ZM1498.64 915.2V905.4h3.8V915.2ZM1502.48 915.2V845.4h3.8V915.2ZM1506.32 915.2V886.0h3.8V915.2ZM1510.16 915.2V908.2h3.8V915.2ZM1517.84 915.2V819.8h3.8V915.2ZM1521.68 915.2V909.2h3.8V915.2ZM1525.52 915.2V907.5h3.8V915.2ZM1529.36 915.2V803.4h3.8V915.2ZM1533.20 915.2V899.3h3.8V915.2ZM1537.04 915.2V907.5h3.8V915.2ZM1544.72 915.2V909.2h3.8V915.2ZM1548.56 915.2V911.9h3.8V915.2ZM1552.40 915.2V824.9h3.8V915.2ZM1556.24 915.2V911.1h3.8V915.2ZM1560.08 915.2V912.0h3.8V915.2ZM1563.92 915.2V813.3h3.8V915.2ZM1567.76 915.2V911.9h3.8V915.2ZM1571.60 915.2V887.7h3.8V915.2ZM1575.44 915.2V909.0h3.8V915.2ZM1579.28 915.2V828.0h3.8V915.2ZM1583.12 915.2V844.6h3.8V915.2ZM1586.96 915.2V910.5h3.8V915.2ZM1590.80 915.2V910.5h3.8V915.2ZM1594.64 915.2V896.2h3.8V915.2ZM1598.48 915.2V885.6h3.8V915.2ZM1602.32 915.2V844.0h3.8V915.2ZM1606.16 915.2V875.7h3.8V915.2ZM1610.00 915.2V900.7h3.8V915.2ZM1617.68 915.2V887.5h3.8V915.2ZM1625.36 915.2V910.5h3.8V915.2ZM1629.20 915.2V906.0h3.8V915.2ZM1633.04 915.2V912.6h3.8V915.2ZM1636.88 915.2V899.3h3.8V915.2ZM1640.72 915.2V909.2h3.8V915.2ZM1644.56 915.2V909.2h3.8V915.2ZM1648.40 915.2V897.9h3.8V915.2ZM1659.92 915.2V826.9h3.8V915.2ZM1663.76 915.2V910.0h3.8V915.2ZM1667.60 915.2V908.2h3.8V915.2ZM1671.44 915.2V913.4h3.8V915.2ZM1675.28 915.2V912.4h3.8V915.2ZM1679.12 915.2V912.4h3.8V915.2ZM1682.96 915.2V911.5h3.8V915.2ZM1686.80 915.2V909.5h3.8V915.2ZM1690.64 915.2V904.8h3.8V915.2ZM1694.48 915.2V911.1h3.8V915.2ZM1702.16 915.2V785.0h3.8V915.2ZM1706.00 915.2V910.5h3.8V915.2ZM1709.84 915.2V899.7h3.8V915.2ZM1713.68 915.2V908.5h3.8V915.2ZM1717.52 915.2V871.2h3.8V915.2ZM1725.20 915.2V910.5h3.8V915.2ZM1729.04 915.2V912.6h3.8V915.2ZM1732.88 915.2V909.0h3.8V915.2ZM1736.72 915.2V909.5h3.8V915.2ZM1740.56 915.2V847.5h3.8V915.2ZM1748.24 915.2V848.5h3.8V915.2ZM1752.08 915.2V912.6h3.8V915.2ZM1755.92 915.2V911.9h3.8V915.2ZM1759.76 915.2V912.4h3.8V915.2ZM1763.60 915.2V899.3h3.8V915.2ZM1767.44 915.2V911.9h3.8V915.2ZM1771.28 915.2V892.6h3.8V915.2ZM1775.12 915.2V908.0h3.8V915.2ZM1778.96 915.2V911.2h3.8V915.2ZM1782.80 915.2V911.9h3.8V915.2ZM1786.64 915.2V874.7h3.8V915.2ZM1790.48 915.2V816.7h3.8V915.2ZM1794.32 915.2V908.0h3.8V915.2ZM1798.16 915.2V910.0h3.8V915.2ZM1802.00 915.2V822.4h3.8V915.2ZM1805.84 915.2V908.2h3.8V915.2ZM1813.52 915.2V907.5h3.8V915.2ZM1817.36 915.2V909.2h3.8V915.2ZM1821.20 915.2V908.5h3.8V915.2ZM1825.04 915.2V880.2h3.8V915.2ZM1828.88 915.2V911.9h3.8V915.2ZM1832.72 915.2V913.4h3.8V915.2ZM1836.56 915.2V908.2h3.8V915.2ZM1840.40 915.2V908.0h3.8V915.2ZM1848.08 915.2V867.1h3.8V915.2ZM1851.92 915.2V897.3h3.8V915.2ZM1859.60 915.2V910.0h3.8V915.2ZM1863.44 915.2V912.6h3.8V915.2ZM1871.12 915.2V859.4h3.8V915.2ZM1874.96 915.2V909.5h3.8V915.2ZM1878.80 915.2V912.6h3.8V915.2ZM1886.48 915.2V911.1h3.8V915.2ZM1890.32 915.2V911.2h3.8V915.2ZM1894.16 915.2V913.4h3.8V915.2ZM1905.68 915.2V912.6h3.8V915.2ZM1909.52 915.2V879.4h3.8V915.2ZM1917.20 915.2V911.1h3.8V915.2ZM1921.04 915.2V876.3h3.8V915.2ZM1924.88 915.2V909.2h3.8V915.2ZM1928.72 915.2V904.0h3.8V915.2ZM1932.56 915.2V904.4h3.8V915.2ZM1940.24 915.2V911.5h3.8V915.2ZM1947.92 915.2V908.2h3.8V915.2ZM1955.60 915.2V889.1h3.8V915.2ZM1959.44 915.2V892.1h3.8V915.2ZM1963.28 915.2V886.4h3.8V915.2ZM1967.12 915.2V913.0h3.8V915.2ZM1970.96 915.2V856.3h3.8V915.2ZM1974.80 915.2V882.4h3.8V915.2ZM1978.64 915.2V911.2h3.8V915.2ZM1986.32 915.2V910.5h3.8V915.2ZM1990.16 915.2V909.0h3.8V915.2ZM1994.00 915.2V881.9h3.8V915.2ZM1997.84 915.2V911.1h3.8V915.2ZM2001.68 915.2V912.3h3.8V915.2ZM2005.52 915.2V911.1h3.8V915.2ZM2009.36 915.2V734.0h3.8V915.2ZM2013.20 915.2V910.2h3.8V915.2ZM2020.88 915.2V911.9h3.8V915.2ZM2028.56 915.2V910.2h3.8V915.2ZM2032.40 915.2V912.0h3.8V915.2ZM2040.08 915.2V912.0h3.8V915.2ZM2043.92 915.2V911.0h3.8V915.2ZM2047.76 915.2V911.0h3.8V915.2ZM2051.60 915.2V913.8h3.8V915.2ZM2055.44 915.2V898.9h3.8V915.2ZM2059.28 915.2V910.5h3.8V915.2ZM2063.12 915.2V902.4h3.8V915.2ZM2066.96 915.2V909.2h3.8V915.2ZM2070.80 915.2V907.2h3.8V915.2ZM2074.64 915.2V911.1h3.8V915.2ZM2078.48 915.2V911.2h3.8V915.2ZM2082.32 915.2V898.3h3.8V915.2ZM2086.16 915.2V913.0h3.8V915.2ZM2090.00 915.2V900.3h3.8V915.2ZM2093.84 915.2V913.4h3.8V915.2ZM2097.68 915.2V912.3h3.8V915.2ZM2101.52 915.2V911.9h3.8V915.2ZM2105.36 915.2V911.9h3.8V915.2ZM2109.20 915.2V872.2h3.8V915.2ZM2113.04 915.2V858.8h3.8V915.2ZM2120.72 915.2V911.5h3.8V915.2ZM2124.56 915.2V912.0h3.8V915.2ZM2128.40 915.2V912.6h3.8V915.2ZM2132.24 915.2V850.7h3.8V915.2ZM2136.08 915.2V912.0h3.8V915.2ZM2139.92 915.2V768.8h3.8V915.2ZM2143.76 915.2V905.4h3.8V915.2ZM2147.60 915.2V881.1h3.8V915.2ZM2151.44 915.2V909.5h3.8V915.2ZM2155.28 915.2V900.9h3.8V915.2ZM2159.12 915.2V911.5h3.8V915.2ZM2162.96 915.2V911.1h3.8V915.2ZM2166.80 915.2V854.8h3.8V915.2ZM2170.64 915.2V909.5h3.8V915.2ZM2174.48 915.2V900.9h3.8V915.2ZM2178.32 915.2V831.1h3.8V915.2ZM2182.16 915.2V913.4h3.8V915.2ZM2186.00 915.2V912.0h3.8V915.2ZM2189.84 915.2V912.0h3.8V915.2ZM2193.68 915.2V912.6h3.8V915.2ZM2197.52 915.2V911.9h3.8V915.2ZM2201.36 915.2V905.8h3.8V915.2ZM2209.04 915.2V913.8h3.8V915.2ZM2212.88 915.2V912.3h3.8V915.2ZM2216.72 915.2V905.4h3.8V915.2ZM2220.56 915.2V911.9h3.8V915.2ZM2224.40 915.2V911.9h3.8V915.2ZM2228.24 915.2V912.3h3.8V915.2ZM2232.08 915.2V912.6h3.8V915.2ZM2235.92 915.2V911.5h3.8V915.2ZM2239.76 915.2V911.5h3.8V915.2ZM2243.60 915.2V911.1h3.8V915.2ZM2251.28 915.2V911.0h3.8V915.2ZM2255.12 915.2V912.0h3.8V915.2ZM2262.80 915.2V912.0h3.8V915.2ZM2266.64 915.2V778.6h3.8V915.2ZM2270.48 915.2V893.2h3.8V915.2ZM2274.32 915.2V911.9h3.8V915.2ZM2278.16 915.2V911.5h3.8V915.2ZM2282.00 915.2V911.9h3.8V915.2ZM2285.84 915.2V892.1h3.8V915.2ZM2293.52 915.2V906.9h3.8V915.2ZM2297.36 915.2V913.0h3.8V915.2ZM2301.20 915.2V913.0h3.8V915.2ZM2305.04 915.2V858.4h3.8V915.2ZM2308.88 915.2V912.0h3.8V915.2ZM2312.72 915.2V911.2h3.8V915.2ZM2316.56 915.2V832.1h3.8V915.2ZM2320.40 915.2V882.6h3.8V915.2ZM2324.24 915.2V912.0h3.8V915.2ZM2328.08 915.2V909.2h3.8V915.2ZM2331.92 915.2V912.0h3.8V915.2ZM2335.76 915.2V911.0h3.8V915.2ZM2339.60 915.2V904.4h3.8V915.2ZM2343.44 915.2V911.5h3.8V915.2ZM2347.28 915.2V913.4h3.8V915.2ZM2351.12 915.2V898.9h3.8V915.2ZM2354.96 915.2V869.2h3.8V915.2ZM2362.64 915.2V860.8h3.8V915.2ZM2370.32 915.2V912.6h3.8V915.2ZM2374.16 915.2V910.0h3.8V915.2ZM2381.84 915.2V911.9h3.8V915.2ZM2385.68 915.2V908.0h3.8V915.2ZM2389.52 915.2V912.0h3.8V915.2ZM2397.20 915.2V892.1h3.8V915.2ZM2404.88 915.2V909.0h3.8V915.2ZM2408.72 915.2V912.0h3.8V915.2ZM2412.56 915.2V911.2h3.8V915.2ZM2416.40 915.2V809.2h3.8V915.2ZM2420.24 915.2V898.3h3.8V915.2ZM2424.08 915.2V911.5h3.8V915.2ZM2431.76 915.2V903.8h3.8V915.2ZM2435.60 915.2V841.9h3.8V915.2ZM2439.44 915.2V911.5h3.8V915.2ZM2447.12 915.2V882.4h3.8V915.2ZM2450.96 915.2V912.0h3.8V915.2ZM2454.80 915.2V911.1h3.8V915.2ZM2458.64 915.2V909.5h3.8V915.2ZM2462.48 915.2V911.9h3.8V915.2ZM2466.32 915.2V912.0h3.8V915.2ZM2474.00 915.2V885.0h3.8V915.2ZM2481.68 915.2V913.8h3.8V915.2ZM2485.52 915.2V798.3h3.8V915.2ZM2489.36 915.2V908.5h3.8V915.2ZM2493.20 915.2V907.2h3.8V915.2ZM2497.04 915.2V895.2h3.8V915.2ZM2500.88 915.2V913.0h3.8V915.2ZM2504.72 915.2V910.0h3.8V915.2ZM2512.40 915.2V840.9h3.8V915.2ZM2516.24 915.2V911.9h3.8V915.2ZM2520.08 915.2V899.3h3.8V915.2ZM2523.92 915.2V913.4h3.8V915.2ZM2527.76 915.2V888.5h3.8V915.2ZM2531.60 915.2V912.0h3.8V915.2ZM2535.44 915.2V906.0h3.8V915.2ZM2539.28 915.2V806.3h3.8V915.2ZM2543.12 915.2V839.9h3.8V915.2ZM2546.96 915.2V862.9h3.8V915.2ZM2554.64 915.2V912.3h3.8V915.2ZM2558.48 915.2V911.2h3.8V915.2ZM2562.32 915.2V913.8h3.8V915.2ZM2566.16 915.2V904.0h3.8V915.2ZM2570.00 915.2V912.3h3.8V915.2ZM2573.84 915.2V817.8h3.8V915.2ZM2577.68 915.2V877.1h3.8V915.2ZM2585.36 915.2V907.5h3.8V915.2ZM2589.20 915.2V653.4h3.8V915.2ZM2593.04 915.2V756.9h3.8V915.2ZM2596.88 915.2V909.2h3.8V915.2ZM2600.72 915.2V905.0h3.8V915.2ZM2604.56 915.2V899.3h3.8V915.2ZM2608.40 915.2V910.5h3.8V915.2ZM2612.24 915.2V911.9h3.8V915.2ZM2616.08 915.2V907.5h3.8V915.2ZM2619.92 915.2V911.1h3.8V915.2ZM2623.76 915.2V912.6h3.8V915.2ZM2627.60 915.2V853.6h3.8V915.2ZM2631.44 915.2V892.1h3.8V915.2ZM2635.28 915.2V859.8h3.8V915.2ZM2639.12 915.2V845.0h3.8V915.2ZM2642.96 915.2V909.5h3.8V915.2ZM2646.80 915.2V910.0h3.8V915.2ZM2650.64 915.2V905.8h3.8V915.2ZM2654.48 915.2V908.2h3.8V915.2ZM2662.16 915.2V911.5h3.8V915.2ZM2666.00 915.2V911.5h3.8V915.2ZM2669.84 915.2V906.4h3.8V915.2ZM2673.68 915.2V898.3h3.8V915.2ZM2677.52 915.2V913.8h3.8V915.2ZM2689.04 915.2V860.4h3.8V915.2ZM2696.72 915.2V905.4h3.8V915.2ZM2700.56 915.2V820.6h3.8V915.2ZM2712.08 915.2V903.0h3.8V915.2ZM2715.92 915.2V908.5h3.8V915.2ZM2719.76 915.2V903.8h3.8V915.2ZM2723.60 915.2V907.5h3.8V915.2ZM2727.44 915.2V885.4h3.8V915.2ZM2731.28 915.2V875.3h3.8V915.2ZM2735.12 915.2V907.2h3.8V915.2ZM2738.96 915.2V813.9h3.8V915.2ZM2742.80 915.2V865.9h3.8V915.2ZM2746.64 915.2V907.5h3.8V915.2ZM2754.32 915.2V912.3h3.8V915.2ZM2758.16 915.2V912.0h3.8V915.2ZM2762.00 915.2V911.9h3.8V915.2ZM2769.68 915.2V911.9h3.8V915.2ZM2773.52 915.2V865.9h3.8V915.2ZM2777.36 915.2V912.6h3.8V915.2ZM2781.20 915.2V818.0h3.8V915.2ZM2785.04 915.2V908.2h3.8V915.2ZM2788.88 915.2V909.0h3.8V915.2ZM2792.72 915.2V878.4h3.8V915.2ZM2796.56 915.2V911.5h3.8V915.2ZM2800.40 915.2V912.6h3.8V915.2ZM2804.24 915.2V906.9h3.8V915.2ZM2808.08 915.2V911.9h3.8V915.2ZM2811.92 915.2V911.5h3.8V915.2ZM2815.76 915.2V864.7h3.8V915.2ZM2823.44 915.2V912.6h3.8V915.2ZM2831.12 915.2V912.3h3.8V915.2ZM2854.16 915.2V910.0h3.8V915.2ZM2861.84 915.2V910.5h3.8V915.2ZM2865.68 915.2V875.7h3.8V915.2ZM2884.88 915.2V912.3h3.8V915.2Z" fill="#e8796b"/>
<path d="M1014.70 943.7V947.1h4V943.7ZM1018.54 943.7V945.9h4V943.7ZM1022.38 943.7V947.5h4V943.7ZM1026.22 943.7V944.8h4V943.7ZM1030.06 943.7V945.4h4V943.7ZM1033.90 943.7V945.4h4V943.7ZM1037.74 943.7V951.0h4V943.7ZM1041.58 943.7V949.3h4V943.7ZM1045.42 943.7V952.4h4V943.7ZM1049.26 943.7V948.5h4V943.7ZM1053.10 943.7V946.3h4V943.7ZM1056.94 943.7V944.8h4V943.7ZM1060.78 943.7V947.5h4V943.7ZM1064.62 943.7V947.5h4V943.7ZM1068.46 943.7V945.4h4V943.7ZM1072.30 943.7V945.4h4V943.7ZM1076.14 943.7V973.6h4V943.7ZM1079.98 943.7V954.4h4V943.7ZM1083.82 943.7V948.5h4V943.7ZM1091.50 943.7V947.5h4V943.7ZM1095.34 943.7V944.8h4V943.7ZM1099.18 943.7V945.4h4V943.7ZM1103.02 943.7V949.3h4V943.7ZM1106.86 943.7V1006.9h4V943.7ZM1110.70 943.7V949.3h4V943.7ZM1114.54 943.7V947.5h4V943.7ZM1118.38 943.7V944.8h4V943.7ZM1122.22 943.7V955.3h4V943.7ZM1126.06 943.7V946.3h4V943.7ZM1129.90 943.7V944.8h4V943.7ZM1133.74 943.7V948.5h4V943.7ZM1137.58 943.7V947.0h4V943.7ZM1141.42 943.7V945.9h4V943.7ZM1145.26 943.7V946.7h4V943.7ZM1149.10 943.7V947.5h4V943.7ZM1152.94 943.7V945.9h4V943.7ZM1156.78 943.7V948.5h4V943.7ZM1160.62 943.7V945.4h4V943.7ZM1164.46 943.7V949.3h4V943.7ZM1168.30 943.7V946.7h4V943.7ZM1172.14 943.7V951.6h4V943.7ZM1175.98 943.7V945.9h4V943.7ZM1179.82 943.7V945.4h4V943.7ZM1183.66 943.7V949.3h4V943.7ZM1187.50 943.7V964.3h4V943.7ZM1191.34 943.7V949.3h4V943.7ZM1195.18 943.7V947.1h4V943.7ZM1199.02 943.7V945.4h4V943.7ZM1202.86 943.7V953.6h4V943.7ZM1206.70 943.7V951.6h4V943.7ZM1210.54 943.7V945.4h4V943.7ZM1214.38 943.7V949.3h4V943.7ZM1218.22 943.7V944.8h4V943.7ZM1222.06 943.7V949.3h4V943.7ZM1229.74 943.7V947.9h4V943.7ZM1233.58 943.7V947.5h4V943.7ZM1237.42 943.7V947.9h4V943.7ZM1241.26 943.7V949.3h4V943.7ZM1245.10 943.7V947.1h4V943.7ZM1248.94 943.7V954.0h4V943.7ZM1252.78 943.7V946.3h4V943.7ZM1256.62 943.7V946.3h4V943.7ZM1260.46 943.7V945.4h4V943.7ZM1264.30 943.7V946.7h4V943.7ZM1268.14 943.7V948.5h4V943.7ZM1271.98 943.7V947.9h4V943.7ZM1275.82 943.7V947.9h4V943.7ZM1279.66 943.7V949.3h4V943.7ZM1283.50 943.7V945.4h4V943.7ZM1287.34 943.7V948.5h4V943.7ZM1291.18 943.7V945.9h4V943.7ZM1295.02 943.7V954.0h4V943.7ZM1298.86 943.7V947.1h4V943.7ZM1302.70 943.7V945.9h4V943.7ZM1306.54 943.7V947.9h4V943.7ZM1310.38 943.7V947.5h4V943.7ZM1314.22 943.7V953.6h4V943.7ZM1318.06 943.7V945.4h4V943.7ZM1321.90 943.7V953.0h4V943.7ZM1325.74 943.7V949.3h4V943.7ZM1329.58 943.7V961.6h4V943.7ZM1333.42 943.7V947.1h4V943.7ZM1337.26 943.7V947.1h4V943.7ZM1341.10 943.7V947.9h4V943.7ZM1344.94 943.7V949.3h4V943.7ZM1348.78 943.7V947.9h4V943.7ZM1352.62 943.7V945.4h4V943.7ZM1356.46 943.7V946.7h4V943.7ZM1360.30 943.7V947.9h4V943.7ZM1364.14 943.7V953.6h4V943.7ZM1367.98 943.7V945.4h4V943.7ZM1371.82 943.7V946.7h4V943.7ZM1375.66 943.7V949.3h4V943.7ZM1379.50 943.7V947.9h4V943.7ZM1383.34 943.7V954.4h4V943.7ZM1387.18 943.7V946.7h4V943.7ZM1391.02 943.7V947.1h4V943.7ZM1394.86 943.7V950.3h4V943.7ZM1398.70 943.7V947.9h4V943.7ZM1402.54 943.7V947.1h4V943.7ZM1410.22 943.7V945.9h4V943.7ZM1414.06 943.7V949.3h4V943.7ZM1417.90 943.7V947.9h4V943.7ZM1421.74 943.7V946.3h4V943.7ZM1425.58 943.7V945.9h4V943.7ZM1429.42 943.7V956.4h4V943.7ZM1433.26 943.7V954.9h4V943.7ZM1437.10 943.7V946.3h4V943.7ZM1440.94 943.7V951.0h4V943.7ZM1444.78 943.7V947.5h4V943.7ZM1448.62 943.7V947.9h4V943.7ZM1452.46 943.7V945.9h4V943.7ZM1456.30 943.7V947.5h4V943.7ZM1460.14 943.7V946.7h4V943.7ZM1463.98 943.7V945.9h4V943.7ZM1467.82 943.7V947.5h4V943.7ZM1471.66 943.7V948.5h4V943.7ZM1475.50 943.7V946.7h4V943.7ZM1479.34 943.7V980.4h4V943.7ZM1483.18 943.7V947.5h4V943.7ZM1487.02 943.7V947.5h4V943.7ZM1490.86 943.7V946.3h4V943.7ZM1494.70 943.7V945.4h4V943.7ZM1498.54 943.7V949.5h4V943.7ZM1502.38 943.7V945.9h4V943.7ZM1506.22 943.7V945.9h4V943.7ZM1510.06 943.7V951.0h4V943.7ZM1513.90 943.7V946.3h4V943.7ZM1517.74 943.7V944.8h4V943.7ZM1521.58 943.7V947.9h4V943.7ZM1525.42 943.7V949.3h4V943.7ZM1529.26 943.7V945.9h4V943.7ZM1533.10 943.7V946.7h4V943.7ZM1536.94 943.7V946.7h4V943.7ZM1540.78 943.7V945.9h4V943.7ZM1544.62 943.7V947.5h4V943.7ZM1548.46 943.7V947.1h4V943.7ZM1552.30 943.7V949.3h4V943.7ZM1556.14 943.7V955.5h4V943.7ZM1559.98 943.7V947.1h4V943.7ZM1563.82 943.7V945.9h4V943.7ZM1567.66 943.7V949.3h4V943.7ZM1571.50 943.7V944.8h4V943.7ZM1575.34 943.7V947.9h4V943.7ZM1579.18 943.7V948.5h4V943.7ZM1583.02 943.7V947.5h4V943.7ZM1586.86 943.7V949.5h4V943.7ZM1590.70 943.7V947.5h4V943.7ZM1594.54 943.7V947.5h4V943.7ZM1598.38 943.7V947.5h4V943.7ZM1602.22 943.7V945.4h4V943.7ZM1606.06 943.7V947.9h4V943.7ZM1609.90 943.7V947.5h4V943.7ZM1613.74 943.7V946.3h4V943.7ZM1617.58 943.7V945.4h4V943.7ZM1621.42 943.7V947.9h4V943.7ZM1625.26 943.7V948.5h4V943.7ZM1629.10 943.7V945.9h4V943.7ZM1632.94 943.7V945.4h4V943.7ZM1636.78 943.7V947.1h4V943.7ZM1640.62 943.7V949.3h4V943.7ZM1644.46 943.7V944.8h4V943.7ZM1648.30 943.7V945.4h4V943.7ZM1652.14 943.7V949.3h4V943.7ZM1659.82 943.7V945.9h4V943.7ZM1663.66 943.7V948.5h4V943.7ZM1667.50 943.7V945.4h4V943.7ZM1671.34 943.7V949.3h4V943.7ZM1675.18 943.7V944.8h4V943.7ZM1679.02 943.7V945.4h4V943.7ZM1682.86 943.7V948.5h4V943.7ZM1686.70 943.7V946.3h4V943.7ZM1690.54 943.7V947.1h4V943.7ZM1694.38 943.7V947.5h4V943.7ZM1698.22 943.7V946.7h4V943.7ZM1702.06 943.7V947.1h4V943.7ZM1705.90 943.7V949.3h4V943.7ZM1709.74 943.7V947.1h4V943.7ZM1713.58 943.7V947.9h4V943.7ZM1717.42 943.7V945.4h4V943.7ZM1721.26 943.7V947.9h4V943.7ZM1725.10 943.7V947.9h4V943.7ZM1728.94 943.7V947.9h4V943.7ZM1732.78 943.7V946.7h4V943.7ZM1736.62 943.7V945.4h4V943.7ZM1740.46 943.7V945.9h4V943.7ZM1744.30 943.7V947.1h4V943.7ZM1748.14 943.7V946.7h4V943.7ZM1751.98 943.7V945.9h4V943.7ZM1755.82 943.7V944.8h4V943.7ZM1759.66 943.7V946.3h4V943.7ZM1763.50 943.7V980.4h4V943.7ZM1767.34 943.7V947.1h4V943.7ZM1771.18 943.7V945.9h4V943.7ZM1775.02 943.7V948.5h4V943.7ZM1778.86 943.7V944.8h4V943.7ZM1782.70 943.7V946.7h4V943.7ZM1786.54 943.7V949.5h4V943.7ZM1790.38 943.7V945.4h4V943.7ZM1794.22 943.7V946.7h4V943.7ZM1798.06 943.7V948.5h4V943.7ZM1801.90 943.7V947.1h4V943.7ZM1805.74 943.7V945.9h4V943.7ZM1813.42 943.7V947.1h4V943.7ZM1817.26 943.7V946.3h4V943.7ZM1821.10 943.7V951.0h4V943.7ZM1824.94 943.7V948.5h4V943.7ZM1828.78 943.7V948.5h4V943.7ZM1832.62 943.7V946.3h4V943.7ZM1836.46 943.7V949.3h4V943.7ZM1840.30 943.7V952.4h4V943.7ZM1844.14 943.7V946.3h4V943.7ZM1847.98 943.7V947.5h4V943.7ZM1851.82 943.7V961.6h4V943.7ZM1855.66 943.7V946.3h4V943.7ZM1859.50 943.7V948.5h4V943.7ZM1863.34 943.7V947.1h4V943.7ZM1867.18 943.7V944.8h4V943.7ZM1871.02 943.7V946.7h4V943.7ZM1874.86 943.7V959.0h4V943.7ZM1878.70 943.7V946.7h4V943.7ZM1882.54 943.7V949.0h4V943.7ZM1886.38 943.7V947.1h4V943.7ZM1890.22 943.7V947.9h4V943.7ZM1894.06 943.7V947.1h4V943.7ZM1897.90 943.7V946.3h4V943.7ZM1901.74 943.7V946.3h4V943.7ZM1905.58 943.7V946.3h4V943.7ZM1909.42 943.7V947.1h4V943.7ZM1913.26 943.7V947.9h4V943.7ZM1917.10 943.7V949.3h4V943.7ZM1920.94 943.7V944.8h4V943.7ZM1924.78 943.7V947.9h4V943.7ZM1928.62 943.7V953.0h4V943.7ZM1932.46 943.7V947.1h4V943.7ZM1936.30 943.7V945.4h4V943.7ZM1940.14 943.7V947.5h4V943.7ZM1943.98 943.7V947.9h4V943.7ZM1947.82 943.7V949.5h4V943.7ZM1951.66 943.7V947.5h4V943.7ZM1955.50 943.7V947.1h4V943.7ZM1959.34 943.7V968.0h4V943.7ZM1963.18 943.7V945.4h4V943.7ZM1967.02 943.7V947.9h4V943.7ZM1970.86 943.7V947.5h4V943.7ZM1974.70 943.7V959.0h4V943.7ZM1978.54 943.7V945.4h4V943.7ZM1982.38 943.7V945.9h4V943.7ZM1986.22 943.7V945.9h4V943.7ZM1990.06 943.7V944.8h4V943.7ZM1993.90 943.7V945.9h4V943.7ZM1997.74 943.7V947.9h4V943.7ZM2001.58 943.7V945.9h4V943.7ZM2005.42 943.7V949.3h4V943.7ZM2009.26 943.7V947.9h4V943.7ZM2013.10 943.7V947.1h4V943.7ZM2016.94 943.7V948.5h4V943.7ZM2020.78 943.7V945.9h4V943.7ZM2024.62 943.7V944.8h4V943.7ZM2028.46 943.7V945.4h4V943.7ZM2032.30 943.7V948.5h4V943.7ZM2036.14 943.7V947.5h4V943.7ZM2039.98 943.7V946.3h4V943.7ZM2043.82 943.7V946.3h4V943.7ZM2047.66 943.7V944.8h4V943.7ZM2051.50 943.7V946.3h4V943.7ZM2055.34 943.7V952.0h4V943.7ZM2059.18 943.7V946.7h4V943.7ZM2063.02 943.7V948.5h4V943.7ZM2066.86 943.7V946.3h4V943.7ZM2070.70 943.7V975.6h4V943.7ZM2074.54 943.7V947.1h4V943.7ZM2078.38 943.7V946.7h4V943.7ZM2082.22 943.7V948.5h4V943.7ZM2086.06 943.7V945.9h4V943.7ZM2089.90 943.7V944.8h4V943.7ZM2093.74 943.7V947.9h4V943.7ZM2097.58 943.7V949.3h4V943.7ZM2101.42 943.7V947.5h4V943.7ZM2105.26 943.7V945.9h4V943.7ZM2109.10 943.7V948.5h4V943.7ZM2112.94 943.7V990.4h4V943.7ZM2116.78 943.7V948.5h4V943.7ZM2120.62 943.7V948.5h4V943.7ZM2124.46 943.7V944.8h4V943.7ZM2128.30 943.7V945.9h4V943.7ZM2132.14 943.7V949.3h4V943.7ZM2135.98 943.7V944.8h4V943.7ZM2139.82 943.7V945.9h4V943.7ZM2143.66 943.7V973.9h4V943.7ZM2147.50 943.7V945.9h4V943.7ZM2151.34 943.7V978.9h4V943.7ZM2155.18 943.7V945.9h4V943.7ZM2159.02 943.7V947.9h4V943.7ZM2162.86 943.7V945.4h4V943.7ZM2166.70 943.7V953.6h4V943.7ZM2170.54 943.7V948.5h4V943.7ZM2174.38 943.7V966.6h4V943.7ZM2178.22 943.7V944.8h4V943.7ZM2182.06 943.7V948.5h4V943.7ZM2185.90 943.7V948.5h4V943.7ZM2189.74 943.7V948.5h4V943.7ZM2193.58 943.7V945.4h4V943.7ZM2197.42 943.7V944.8h4V943.7ZM2201.26 943.7V953.0h4V943.7ZM2205.10 943.7V946.3h4V943.7ZM2208.94 943.7V944.8h4V943.7ZM2212.78 943.7V945.4h4V943.7ZM2216.62 943.7V953.6h4V943.7ZM2220.46 943.7V947.9h4V943.7ZM2224.30 943.7V944.8h4V943.7ZM2228.14 943.7V945.4h4V943.7ZM2231.98 943.7V947.1h4V943.7ZM2235.82 943.7V949.3h4V943.7ZM2239.66 943.7V948.5h4V943.7ZM2243.50 943.7V948.5h4V943.7ZM2247.34 943.7V946.7h4V943.7ZM2251.18 943.7V947.9h4V943.7ZM2255.02 943.7V948.5h4V943.7ZM2262.70 943.7V948.5h4V943.7ZM2266.54 943.7V947.9h4V943.7ZM2270.38 943.7V956.4h4V943.7ZM2274.22 943.7V946.3h4V943.7ZM2278.06 943.7V950.3h4V943.7ZM2281.90 943.7V946.7h4V943.7ZM2285.74 943.7V948.5h4V943.7ZM2289.58 943.7V947.9h4V943.7ZM2293.42 943.7V945.9h4V943.7ZM2297.26 943.7V945.4h4V943.7ZM2301.10 943.7V947.9h4V943.7ZM2304.94 943.7V947.1h4V943.7ZM2308.78 943.7V945.4h4V943.7ZM2312.62 943.7V946.3h4V943.7ZM2316.46 943.7V1005.9h4V943.7ZM2320.30 943.7V947.5h4V943.7ZM2324.14 943.7V945.4h4V943.7ZM2327.98 943.7V946.3h4V943.7ZM2331.82 943.7V946.7h4V943.7ZM2335.66 943.7V945.4h4V943.7ZM2339.50 943.7V950.0h4V943.7ZM2343.34 943.7V945.9h4V943.7ZM2347.18 943.7V945.9h4V943.7ZM2351.02 943.7V977.6h4V943.7ZM2354.86 943.7V946.7h4V943.7ZM2358.70 943.7V947.9h4V943.7ZM2362.54 943.7V946.3h4V943.7ZM2366.38 943.7V947.5h4V943.7ZM2370.22 943.7V945.9h4V943.7ZM2374.06 943.7V946.3h4V943.7ZM2377.90 943.7V947.5h4V943.7ZM2381.74 943.7V947.5h4V943.7ZM2385.58 943.7V947.1h4V943.7ZM2389.42 943.7V947.5h4V943.7ZM2393.26 943.7V947.1h4V943.7ZM2397.10 943.7V947.1h4V943.7ZM2404.78 943.7V945.4h4V943.7ZM2408.62 943.7V947.1h4V943.7ZM2412.46 943.7V1011.9h4V943.7ZM2416.30 943.7V944.8h4V943.7ZM2420.14 943.7V947.1h4V943.7ZM2423.98 943.7V948.5h4V943.7ZM2431.66 943.7V961.0h4V943.7ZM2435.50 943.7V947.9h4V943.7ZM2439.34 943.7V947.9h4V943.7ZM2443.18 943.7V947.5h4V943.7ZM2447.02 943.7V947.1h4V943.7ZM2450.86 943.7V948.5h4V943.7ZM2454.70 943.7V946.7h4V943.7ZM2458.54 943.7V964.9h4V943.7ZM2462.38 943.7V945.4h4V943.7ZM2466.22 943.7V945.4h4V943.7ZM2470.06 943.7V945.4h4V943.7ZM2473.90 943.7V950.3h4V943.7ZM2477.74 943.7V946.7h4V943.7ZM2481.58 943.7V944.8h4V943.7ZM2485.42 943.7V945.9h4V943.7ZM2489.26 943.7V946.7h4V943.7ZM2493.10 943.7V956.6h4V943.7ZM2496.94 943.7V945.9h4V943.7ZM2500.78 943.7V946.7h4V943.7ZM2504.62 943.7V947.5h4V943.7ZM2508.46 943.7V948.5h4V943.7ZM2512.30 943.7V958.4h4V943.7ZM2516.14 943.7V949.3h4V943.7ZM2519.98 943.7V947.9h4V943.7ZM2523.82 943.7V945.4h4V943.7ZM2527.66 943.7V951.0h4V943.7ZM2531.50 943.7V946.7h4V943.7ZM2535.34 943.7V944.8h4V943.7ZM2539.18 943.7V945.9h4V943.7ZM2543.02 943.7V954.9h4V943.7ZM2546.86 943.7V947.5h4V943.7ZM2550.70 943.7V946.7h4V943.7ZM2554.54 943.7V944.8h4V943.7ZM2558.38 943.7V945.4h4V943.7ZM2562.22 943.7V949.5h4V943.7ZM2566.06 943.7V945.4h4V943.7ZM2569.90 943.7V949.3h4V943.7ZM2573.74 943.7V946.3h4V943.7ZM2577.58 943.7V949.0h4V943.7ZM2585.26 943.7V945.4h4V943.7ZM2589.10 943.7V946.7h4V943.7ZM2592.94 943.7V945.4h4V943.7ZM2596.78 943.7V947.9h4V943.7ZM2600.62 943.7V953.6h4V943.7ZM2604.46 943.7V944.8h4V943.7ZM2608.30 943.7V947.1h4V943.7ZM2612.14 943.7V947.5h4V943.7ZM2615.98 943.7V946.7h4V943.7ZM2619.82 943.7V945.9h4V943.7ZM2623.66 943.7V944.8h4V943.7ZM2627.50 943.7V950.3h4V943.7ZM2631.34 943.7V987.0h4V943.7ZM2635.18 943.7V948.5h4V943.7ZM2639.02 943.7V946.3h4V943.7ZM2642.86 943.7V945.4h4V943.7ZM2646.70 943.7V945.9h4V943.7ZM2650.54 943.7V946.7h4V943.7ZM2654.38 943.7V944.8h4V943.7ZM2662.06 943.7V967.0h4V943.7ZM2665.90 943.7V945.9h4V943.7ZM2669.74 943.7V946.3h4V943.7ZM2673.58 943.7V946.7h4V943.7ZM2677.42 943.7V948.5h4V943.7ZM2688.94 943.7V954.4h4V943.7ZM2692.78 943.7V946.7h4V943.7ZM2696.62 943.7V951.6h4V943.7ZM2700.46 943.7V947.9h4V943.7ZM2711.98 943.7V948.5h4V943.7ZM2715.82 943.7V945.9h4V943.7ZM2719.66 943.7V946.7h4V943.7ZM2723.50 943.7V947.1h4V943.7ZM2727.34 943.7V944.8h4V943.7ZM2731.18 943.7V956.6h4V943.7ZM2735.02 943.7V946.7h4V943.7ZM2738.86 943.7V944.8h4V943.7ZM2742.70 943.7V944.8h4V943.7ZM2746.54 943.7V944.8h4V943.7ZM2754.22 943.7V948.5h4V943.7ZM2758.06 943.7V949.0h4V943.7ZM2761.90 943.7V946.3h4V943.7ZM2769.58 943.7V947.9h4V943.7ZM2773.42 943.7V946.3h4V943.7ZM2777.26 943.7V945.4h4V943.7ZM2781.10 943.7V949.5h4V943.7ZM2784.94 943.7V949.5h4V943.7ZM2788.78 943.7V949.5h4V943.7ZM2792.62 943.7V950.0h4V943.7ZM2796.46 943.7V947.5h4V943.7ZM2800.30 943.7V948.5h4V943.7ZM2804.14 943.7V947.5h4V943.7ZM2807.98 943.7V946.7h4V943.7ZM2811.82 943.7V946.3h4V943.7ZM2815.66 943.7V1085.8h4V943.7ZM2819.50 943.7V947.1h4V943.7ZM2823.34 943.7V946.3h4V943.7ZM2831.02 943.7V945.9h4V943.7ZM2834.86 943.7V947.5h4V943.7ZM2854.06 943.7V947.1h4V943.7ZM2857.90 943.7V944.8h4V943.7ZM2861.74 943.7V945.9h4V943.7ZM2865.58 943.7V944.8h4V943.7ZM2884.78 943.7V963.4h4V943.7Z" fill="#0473a2"/>
<g clip-path="url(#c4)"><path d="M1016.7 1331.2L1020.5 1256.6L1024.4 1257.7L1028.2 1254.9L1032.1 1235.7L1035.9 1235.7L1039.7 1258.7L1043.6 1235.7L1047.4 1235.7L1051.3 1235.7L1055.1 1235.7L1058.9 1265.8L1062.8 1247.4L1066.6 1238.3L1070.5 1238.3L1074.3 1432.4L1078.1 1235.7L1082 1235.7L1085.8 1258.7L1089.7 1491.1L1093.5 1235.7L1097.3 1235.7L1101.2 1270.9L1105 1427.2L1108.9 1380.3L1112.7 1386.4L1116.5 1397.4L1120.4 1349.6L1124.2 1241.6L1128.1 1250.5L1131.9 1254.6L1135.7 1248.5L1139.6 1287.8L1143.4 1282.7L1147.3 1235.7L1151.1 1274L1154.9 1235.7L1158.8 1242.3L1162.6 1235.7L1166.5 1244.4L1170.3 1239.3L1174.1 1235.7L1178 1334.3L1181.8 1244.4L1185.7 1248.5L1189.5 1247.4L1193.3 1300.6L1197.2 1238.5L1201 1247.4L1204.9 1293.4L1208.7 1235.7L1212.5 1235.7L1216.4 1235.7L1220.2 1246.4L1224.1 1235.7L1227.9 1491.1L1231.7 1235.7L1235.6 1295.5L1239.4 1235.7L1243.3 1277.3L1247.1 1372.6L1250.9 1268.9L1254.8 1235.7L1258.6 1240.3L1262.5 1235.7L1266.3 1235.7L1270.1 1286.8L1274 1266.9L1277.8 1235.7L1281.7 1235.7L1285.5 1235.7L1289.3 1272L1293.2 1308.7L1297 1235.7L1300.9 1235.7L1304.7 1235.7L1308.5 1354.2L1312.4 1235.7L1316.2 1262.8L1320.1 1439.5L1323.9 1250.5L1327.7 1374.6L1331.6 1235.7L1335.4 1238.3L1339.3 1320L1343.1 1235.7L1346.9 1249.5L1350.8 1293.4L1354.6 1255.6L1358.5 1295.7L1362.3 1249.5L1366.1 1267.9L1370 1250.5L1373.8 1485L1377.7 1251.5L1381.5 1244.4L1385.3 1238.3L1389.2 1265.8L1393 1235.7L1396.9 1235.7L1400.7 1235.7L1404.5 1270.9L1408.4 1491.1L1412.2 1283.2L1416.1 1238.3L1419.9 1235.7L1423.7 1235.7L1427.6 1242.6L1431.4 1235.7L1435.3 1256.9L1439.1 1245.4L1442.9 1238.3L1446.8 1235.7L1450.6 1249.7L1454.5 1235.7L1458.3 1240.3L1462.1 1235.7L1466 1235.7L1469.8 1267.1L1473.7 1334.3L1477.5 1242.3L1481.3 1278.6L1485.2 1243.9L1489 1254.6L1492.9 1249.7L1496.7 1358.3L1500.5 1235.7L1504.4 1240.3L1508.2 1235.7L1512.1 1251.5L1515.9 1254.1L1519.7 1235.7L1523.6 1240.3L1527.4 1245.4L1531.3 1244.4L1535.1 1246.4L1538.9 1235.7L1542.8 1235.7L1546.6 1254.6L1550.5 1257.7L1554.3 1235.7L1558.1 1483.4L1562 1235.7L1565.8 1252.6L1569.7 1272.5L1573.5 1235.7L1577.3 1235.7L1581.2 1235.7L1585 1240.8L1588.9 1238.3L1592.7 1281.7L1596.5 1266.9L1600.4 1235.7L1604.2 1255.6L1608.1 1235.7L1611.9 1250.5L1615.7 1289.6L1619.6 1250.5L1623.4 1235.7L1627.3 1266.3L1631.1 1273L1634.9 1363.9L1638.8 1247.4L1642.6 1238.3L1646.5 1266.3L1650.3 1235.7L1654.1 1235.7L1658 1491.1L1661.8 1235.7L1665.7 1235.7L1669.5 1235.7L1673.3 1235.7L1677.2 1235.7L1681 1235.7L1684.9 1266.3L1688.7 1235.7L1692.5 1235.7L1696.4 1235.7L1700.2 1235.7L1704.1 1235.7L1707.9 1235.7L1711.7 1288.6L1715.6 1268.9L1719.4 1265.8L1723.3 1244.6L1727.1 1235.7L1730.9 1244.4L1734.8 1244.4L1738.6 1249.5L1742.5 1235.7L1746.3 1235.7L1750.1 1255.6L1754 1244.6L1757.8 1280.1L1761.7 1235.7L1765.5 1248.5L1769.3 1235.7L1773.2 1364.9L1777 1235.7L1780.9 1235.7L1784.7 1250.5L1788.5 1235.7L1792.4 1247.4L1796.2 1238.3L1800.1 1250.5L1803.9 1239.3L1807.7 1245.4L1811.6 1491.1L1815.4 1284.5L1819.3 1238.5L1823.1 1235.7L1826.9 1235.7L1830.8 1243.4L1834.6 1235.7L1838.5 1235.7L1842.3 1243.4L1846.1 1307.2L1850 1235.7L1853.8 1250.5L1857.7 1235.7L1861.5 1235.7L1865.3 1388.4L1869.2 1249.5L1873 1237.2L1876.9 1240.3L1880.7 1247.4L1884.5 1337.9L1888.4 1292.9L1892.2 1259.7L1896.1 1283.2L1899.9 1235.7L1903.7 1451.5L1907.6 1398.1L1911.4 1265.8L1915.3 1279.6L1919.1 1401.5L1922.9 1248L1926.8 1312.3L1930.6 1258.7L1934.5 1301.6L1938.3 1257.7L1942.1 1245.4L1946 1235.7L1949.8 1235.7L1953.7 1235.7L1957.5 1235.7L1961.3 1267.1L1965.2 1238.3L1969 1275L1972.9 1242.3L1976.7 1242.3L1980.5 1235.7L1984.4 1278.1L1988.2 1256.6L1992.1 1246.4L1995.9 1251.5L1999.7 1237.2L2003.6 1269.2L2007.4 1235.7L2011.3 1235.7L2015.1 1235.7L2018.9 1235.7L2022.8 1235.7L2026.6 1235.7L2030.5 1256.6L2034.3 1261.8L2038.1 1235.7L2042 1365.4L2045.8 1235.7L2049.7 1335.8L2053.5 1241.3L2057.3 1247.4L2061.2 1243.4L2065 1354.2L2068.9 1245.4L2072.7 1245.4L2076.5 1242.6L2080.4 1282.2L2084.2 1268.4L2088.1 1235.7L2091.9 1235.7L2095.7 1235.7L2099.6 1235.7L2103.4 1235.7L2107.3 1235.7L2111.1 1249.7L2114.9 1249.7L2118.8 1275L2122.6 1312.3L2126.5 1268.9L2130.3 1235.7L2134.1 1247.4L2138 1269.9L2141.8 1252.6L2145.7 1282.2L2149.5 1263.8L2153.3 1257.7L2157.2 1250.5L2161 1235.7L2164.9 1235.7L2168.7 1253.6L2172.5 1269.9L2176.4 1250.5L2180.2 1295.5L2184.1 1426L2187.9 1370L2191.7 1319L2195.6 1475.3L2199.4 1235.7L2203.3 1238.3L2207.1 1348.1L2210.9 1306.7L2214.8 1235.7L2218.6 1288.8L2222.5 1235.7L2226.3 1244.4L2230.1 1235.7L2234 1239.3L2237.8 1249.7L2241.7 1235.7L2245.5 1235.7L2249.3 1235.7L2253.2 1235.7L2257 1235.7L2260.9 1491.1L2264.7 1235.7L2268.5 1328.7L2272.4 1235.7L2276.2 1285.5L2280.1 1272.2L2283.9 1235.7L2287.7 1235.7L2291.6 1235.7L2295.4 1256.6L2299.3 1235.7L2303.1 1235.7L2306.9 1235.7L2310.8 1244.4L2314.6 1256.6L2318.5 1260.7L2322.3 1275L2326.1 1235.7L2330 1235.7L2333.8 1347.1L2337.7 1235.7L2341.5 1274L2345.3 1255.6L2349.2 1316.9L2353 1295.7L2356.9 1235.7L2360.7 1238.3L2364.5 1238.3L2368.4 1238.3L2372.2 1254.9L2376.1 1235.7L2379.9 1235.7L2383.7 1235.7L2387.6 1235.7L2391.4 1241.3L2395.3 1267.4L2399.1 1260.2L2402.9 1491.1L2406.8 1244.4L2410.6 1235.7L2414.5 1256.6L2418.3 1235.7L2422.1 1336.3L2426 1370L2429.8 1491.1L2433.7 1311.8L2437.5 1260.7L2441.3 1235.7L2445.2 1235.7L2449 1260.7L2452.9 1245.4L2456.7 1235.7L2460.5 1251.5L2464.4 1244.4L2468.2 1254.1L2472.1 1235.7L2475.9 1235.7L2479.7 1235.7L2483.6 1255.6L2487.4 1248.5L2491.3 1235.7L2495.1 1242.3L2498.9 1235.7L2502.8 1235.7L2506.6 1266.9L2510.5 1235.7L2514.3 1238.3L2518.1 1270.9L2522 1251L2525.8 1235.7L2529.7 1245.4L2533.5 1258.7L2537.3 1290.9L2541.2 1238.5L2545 1240.3L2548.9 1235.7L2552.7 1235.7L2556.5 1243.9L2560.4 1266.9L2564.2 1250.5L2568.1 1243.4L2571.9 1368.5L2575.7 1267.9L2579.6 1238.5L2583.4 1491.1L2587.3 1269.9L2591.1 1305.7L2594.9 1415.8L2598.8 1235.7L2602.6 1235.7L2606.5 1239.3L2610.3 1235.7L2614.1 1235.7L2618 1268.9L2621.8 1235.7L2625.7 1465.6L2629.5 1235.7L2633.3 1454.8L2637.2 1245.4L2641 1238.3L2644.9 1235.7L2648.7 1235.7L2652.5 1263.8L2656.4 1248L2660.2 1491.1L2664.1 1265.1L2667.9 1244.4L2671.7 1321L2675.6 1289.3L2679.4 1235.7L2683.3 1491.1L2687.1 1491.1L2690.9 1249.5L2694.8 1237.2L2698.6 1237.2L2702.5 1237.2L2706.3 1491.1L2710.1 1491.1L2714 1245.4L2717.8 1235.7L2721.7 1235.7L2725.5 1235.7L2729.3 1235.7L2733.2 1265.8L2737 1235.7L2740.9 1262.8L2744.7 1235.7L2748.5 1244.4L2752.4 1491.1L2756.2 1442.6L2760.1 1235.7L2763.9 1235.7L2767.7 1491.1L2771.6 1235.7L2775.4 1241.3L2779.3 1235.7L2783.1 1235.7L2786.9 1249.5L2790.8 1247.4L2794.6 1235.7L2798.5 1260.7L2802.3 1235.7L2806.1 1235.7L2810 1235.7L2813.8 1319.5L2817.7 1238.3L2821.5 1310.8L2825.3 1248.5L2829.2 1491.1L2833 1249.5L2836.9 1235.7L2840.7 1491.1L2844.5 1491.1L2848.4 1491.1L2852.2 1491.1L2856.1 1259.7L2859.9 1235.7L2863.7 1235.7L2867.6 1235.7L2871.4 1491.1L2875.3 1491.1L2879.1 1491.1L2882.9 1491.1L2886.8 1388.4L2890.6 1491.1L2894.5 1491.1L2898.3 1491.1L2902.1 1491.1L2906 1491.1L2909.8 1491.1L2913.7 1491.1L2917.5 1491.1L2921.3 1491.1L2925.2 1491.1L2929 1491.1L2932.9 1491.1" fill="none" stroke="#53b6e1" stroke-width="3.9" stroke-linejoin="round" stroke-linecap="round"/><path d="M1016.7 1331.2h0M1020.5 1256.6h0M1024.4 1257.7h0M1028.2 1254.9h0M1032.1 1235.7h0M1035.9 1235.7h0M1039.7 1258.7h0M1043.6 1235.7h0M1047.4 1235.7h0M1051.3 1235.7h0M1055.1 1235.7h0M1058.9 1265.8h0M1062.8 1247.4h0M1066.6 1238.3h0M1070.5 1238.3h0M1074.3 1432.4h0M1078.1 1235.7h0M1082 1235.7h0M1085.8 1258.7h0M1089.7 1491.1h0M1093.5 1235.7h0M1097.3 1235.7h0M1101.2 1270.9h0M1105 1427.2h0M1108.9 1380.3h0M1112.7 1386.4h0M1116.5 1397.4h0M1120.4 1349.6h0M1124.2 1241.6h0M1128.1 1250.5h0M1131.9 1254.6h0M1135.7 1248.5h0M1139.6 1287.8h0M1143.4 1282.7h0M1147.3 1235.7h0M1151.1 1274h0M1154.9 1235.7h0M1158.8 1242.3h0M1162.6 1235.7h0M1166.5 1244.4h0M1170.3 1239.3h0M1174.1 1235.7h0M1178 1334.3h0M1181.8 1244.4h0M1185.7 1248.5h0M1189.5 1247.4h0M1193.3 1300.6h0M1197.2 1238.5h0M1201 1247.4h0M1204.9 1293.4h0M1208.7 1235.7h0M1212.5 1235.7h0M1216.4 1235.7h0M1220.2 1246.4h0M1224.1 1235.7h0M1227.9 1491.1h0M1231.7 1235.7h0M1235.6 1295.5h0M1239.4 1235.7h0M1243.3 1277.3h0M1247.1 1372.6h0M1250.9 1268.9h0M1254.8 1235.7h0M1258.6 1240.3h0M1262.5 1235.7h0M1266.3 1235.7h0M1270.1 1286.8h0M1274 1266.9h0M1277.8 1235.7h0M1281.7 1235.7h0M1285.5 1235.7h0M1289.3 1272h0M1293.2 1308.7h0M1297 1235.7h0M1300.9 1235.7h0M1304.7 1235.7h0M1308.5 1354.2h0M1312.4 1235.7h0M1316.2 1262.8h0M1320.1 1439.5h0M1323.9 1250.5h0M1327.7 1374.6h0M1331.6 1235.7h0M1335.4 1238.3h0M1339.3 1320h0M1343.1 1235.7h0M1346.9 1249.5h0M1350.8 1293.4h0M1354.6 1255.6h0M1358.5 1295.7h0M1362.3 1249.5h0M1366.1 1267.9h0M1370 1250.5h0M1373.8 1485h0M1377.7 1251.5h0M1381.5 1244.4h0M1385.3 1238.3h0M1389.2 1265.8h0M1393 1235.7h0M1396.9 1235.7h0M1400.7 1235.7h0M1404.5 1270.9h0M1408.4 1491.1h0M1412.2 1283.2h0M1416.1 1238.3h0M1419.9 1235.7h0M1423.7 1235.7h0M1427.6 1242.6h0M1431.4 1235.7h0M1435.3 1256.9h0M1439.1 1245.4h0M1442.9 1238.3h0M1446.8 1235.7h0M1450.6 1249.7h0M1454.5 1235.7h0M1458.3 1240.3h0M1462.1 1235.7h0M1466 1235.7h0M1469.8 1267.1h0M1473.7 1334.3h0M1477.5 1242.3h0M1481.3 1278.6h0M1485.2 1243.9h0M1489 1254.6h0M1492.9 1249.7h0M1496.7 1358.3h0M1500.5 1235.7h0M1504.4 1240.3h0M1508.2 1235.7h0M1512.1 1251.5h0M1515.9 1254.1h0M1519.7 1235.7h0M1523.6 1240.3h0M1527.4 1245.4h0M1531.3 1244.4h0M1535.1 1246.4h0M1538.9 1235.7h0M1542.8 1235.7h0M1546.6 1254.6h0M1550.5 1257.7h0M1554.3 1235.7h0M1558.1 1483.4h0M1562 1235.7h0M1565.8 1252.6h0M1569.7 1272.5h0M1573.5 1235.7h0M1577.3 1235.7h0M1581.2 1235.7h0M1585 1240.8h0M1588.9 1238.3h0M1592.7 1281.7h0M1596.5 1266.9h0M1600.4 1235.7h0M1604.2 1255.6h0M1608.1 1235.7h0M1611.9 1250.5h0M1615.7 1289.6h0M1619.6 1250.5h0M1623.4 1235.7h0M1627.3 1266.3h0M1631.1 1273h0M1634.9 1363.9h0M1638.8 1247.4h0M1642.6 1238.3h0M1646.5 1266.3h0M1650.3 1235.7h0M1654.1 1235.7h0M1658 1491.1h0M1661.8 1235.7h0M1665.7 1235.7h0M1669.5 1235.7h0M1673.3 1235.7h0M1677.2 1235.7h0M1681 1235.7h0M1684.9 1266.3h0M1688.7 1235.7h0M1692.5 1235.7h0M1696.4 1235.7h0M1700.2 1235.7h0M1704.1 1235.7h0M1707.9 1235.7h0M1711.7 1288.6h0M1715.6 1268.9h0M1719.4 1265.8h0M1723.3 1244.6h0M1727.1 1235.7h0M1730.9 1244.4h0M1734.8 1244.4h0M1738.6 1249.5h0M1742.5 1235.7h0M1746.3 1235.7h0M1750.1 1255.6h0M1754 1244.6h0M1757.8 1280.1h0M1761.7 1235.7h0M1765.5 1248.5h0M1769.3 1235.7h0M1773.2 1364.9h0M1777 1235.7h0M1780.9 1235.7h0M1784.7 1250.5h0M1788.5 1235.7h0M1792.4 1247.4h0M1796.2 1238.3h0M1800.1 1250.5h0M1803.9 1239.3h0M1807.7 1245.4h0M1811.6 1491.1h0M1815.4 1284.5h0M1819.3 1238.5h0M1823.1 1235.7h0M1826.9 1235.7h0M1830.8 1243.4h0M1834.6 1235.7h0M1838.5 1235.7h0M1842.3 1243.4h0M1846.1 1307.2h0M1850 1235.7h0M1853.8 1250.5h0M1857.7 1235.7h0M1861.5 1235.7h0M1865.3 1388.4h0M1869.2 1249.5h0M1873 1237.2h0M1876.9 1240.3h0M1880.7 1247.4h0M1884.5 1337.9h0M1888.4 1292.9h0M1892.2 1259.7h0M1896.1 1283.2h0M1899.9 1235.7h0M1903.7 1451.5h0M1907.6 1398.1h0M1911.4 1265.8h0M1915.3 1279.6h0M1919.1 1401.5h0M1922.9 1248h0M1926.8 1312.3h0M1930.6 1258.7h0M1934.5 1301.6h0M1938.3 1257.7h0M1942.1 1245.4h0M1946 1235.7h0M1949.8 1235.7h0M1953.7 1235.7h0M1957.5 1235.7h0M1961.3 1267.1h0M1965.2 1238.3h0M1969 1275h0M1972.9 1242.3h0M1976.7 1242.3h0M1980.5 1235.7h0M1984.4 1278.1h0M1988.2 1256.6h0M1992.1 1246.4h0M1995.9 1251.5h0M1999.7 1237.2h0M2003.6 1269.2h0M2007.4 1235.7h0M2011.3 1235.7h0M2015.1 1235.7h0M2018.9 1235.7h0M2022.8 1235.7h0M2026.6 1235.7h0M2030.5 1256.6h0M2034.3 1261.8h0M2038.1 1235.7h0M2042 1365.4h0M2045.8 1235.7h0M2049.7 1335.8h0M2053.5 1241.3h0M2057.3 1247.4h0M2061.2 1243.4h0M2065 1354.2h0M2068.9 1245.4h0M2072.7 1245.4h0M2076.5 1242.6h0M2080.4 1282.2h0M2084.2 1268.4h0M2088.1 1235.7h0M2091.9 1235.7h0M2095.7 1235.7h0M2099.6 1235.7h0M2103.4 1235.7h0M2107.3 1235.7h0M2111.1 1249.7h0M2114.9 1249.7h0M2118.8 1275h0M2122.6 1312.3h0M2126.5 1268.9h0M2130.3 1235.7h0M2134.1 1247.4h0M2138 1269.9h0M2141.8 1252.6h0M2145.7 1282.2h0M2149.5 1263.8h0M2153.3 1257.7h0M2157.2 1250.5h0M2161 1235.7h0M2164.9 1235.7h0M2168.7 1253.6h0M2172.5 1269.9h0M2176.4 1250.5h0M2180.2 1295.5h0M2184.1 1426h0M2187.9 1370h0M2191.7 1319h0M2195.6 1475.3h0M2199.4 1235.7h0M2203.3 1238.3h0M2207.1 1348.1h0M2210.9 1306.7h0M2214.8 1235.7h0M2218.6 1288.8h0M2222.5 1235.7h0M2226.3 1244.4h0M2230.1 1235.7h0M2234 1239.3h0M2237.8 1249.7h0M2241.7 1235.7h0M2245.5 1235.7h0M2249.3 1235.7h0M2253.2 1235.7h0M2257 1235.7h0M2260.9 1491.1h0M2264.7 1235.7h0M2268.5 1328.7h0M2272.4 1235.7h0M2276.2 1285.5h0M2280.1 1272.2h0M2283.9 1235.7h0M2287.7 1235.7h0M2291.6 1235.7h0M2295.4 1256.6h0M2299.3 1235.7h0M2303.1 1235.7h0M2306.9 1235.7h0M2310.8 1244.4h0M2314.6 1256.6h0M2318.5 1260.7h0M2322.3 1275h0M2326.1 1235.7h0M2330 1235.7h0M2333.8 1347.1h0M2337.7 1235.7h0M2341.5 1274h0M2345.3 1255.6h0M2349.2 1316.9h0M2353 1295.7h0M2356.9 1235.7h0M2360.7 1238.3h0M2364.5 1238.3h0M2368.4 1238.3h0M2372.2 1254.9h0M2376.1 1235.7h0M2379.9 1235.7h0M2383.7 1235.7h0M2387.6 1235.7h0M2391.4 1241.3h0M2395.3 1267.4h0M2399.1 1260.2h0M2402.9 1491.1h0M2406.8 1244.4h0M2410.6 1235.7h0M2414.5 1256.6h0M2418.3 1235.7h0M2422.1 1336.3h0M2426 1370h0M2429.8 1491.1h0M2433.7 1311.8h0M2437.5 1260.7h0M2441.3 1235.7h0M2445.2 1235.7h0M2449 1260.7h0M2452.9 1245.4h0M2456.7 1235.7h0M2460.5 1251.5h0M2464.4 1244.4h0M2468.2 1254.1h0M2472.1 1235.7h0M2475.9 1235.7h0M2479.7 1235.7h0M2483.6 1255.6h0M2487.4 1248.5h0M2491.3 1235.7h0M2495.1 1242.3h0M2498.9 1235.7h0M2502.8 1235.7h0M2506.6 1266.9h0M2510.5 1235.7h0M2514.3 1238.3h0M2518.1 1270.9h0M2522 1251h0M2525.8 1235.7h0M2529.7 1245.4h0M2533.5 1258.7h0M2537.3 1290.9h0M2541.2 1238.5h0M2545 1240.3h0M2548.9 1235.7h0M2552.7 1235.7h0M2556.5 1243.9h0M2560.4 1266.9h0M2564.2 1250.5h0M2568.1 1243.4h0M2571.9 1368.5h0M2575.7 1267.9h0M2579.6 1238.5h0M2583.4 1491.1h0M2587.3 1269.9h0M2591.1 1305.7h0M2594.9 1415.8h0M2598.8 1235.7h0M2602.6 1235.7h0M2606.5 1239.3h0M2610.3 1235.7h0M2614.1 1235.7h0M2618 1268.9h0M2621.8 1235.7h0M2625.7 1465.6h0M2629.5 1235.7h0M2633.3 1454.8h0M2637.2 1245.4h0M2641 1238.3h0M2644.9 1235.7h0M2648.7 1235.7h0M2652.5 1263.8h0M2656.4 1248h0M2660.2 1491.1h0M2664.1 1265.1h0M2667.9 1244.4h0M2671.7 1321h0M2675.6 1289.3h0M2679.4 1235.7h0M2683.3 1491.1h0M2687.1 1491.1h0M2690.9 1249.5h0M2694.8 1237.2h0M2698.6 1237.2h0M2702.5 1237.2h0M2706.3 1491.1h0M2710.1 1491.1h0M2714 1245.4h0M2717.8 1235.7h0M2721.7 1235.7h0M2725.5 1235.7h0M2729.3 1235.7h0M2733.2 1265.8h0M2737 1235.7h0M2740.9 1262.8h0M2744.7 1235.7h0M2748.5 1244.4h0M2752.4 1491.1h0M2756.2 1442.6h0M2760.1 1235.7h0M2763.9 1235.7h0M2767.7 1491.1h0M2771.6 1235.7h0M2775.4 1241.3h0M2779.3 1235.7h0M2783.1 1235.7h0M2786.9 1249.5h0M2790.8 1247.4h0M2794.6 1235.7h0M2798.5 1260.7h0M2802.3 1235.7h0M2806.1 1235.7h0M2810 1235.7h0M2813.8 1319.5h0M2817.7 1238.3h0M2821.5 1310.8h0M2825.3 1248.5h0M2829.2 1491.1h0M2833 1249.5h0M2836.9 1235.7h0M2840.7 1491.1h0M2844.5 1491.1h0M2848.4 1491.1h0M2852.2 1491.1h0M2856.1 1259.7h0M2859.9 1235.7h0M2863.7 1235.7h0M2867.6 1235.7h0M2871.4 1491.1h0M2875.3 1491.1h0M2879.1 1491.1h0M2882.9 1491.1h0M2886.8 1388.4h0M2890.6 1491.1h0M2894.5 1491.1h0M2898.3 1491.1h0M2902.1 1491.1h0M2906 1491.1h0M2909.8 1491.1h0M2913.7 1491.1h0M2917.5 1491.1h0M2921.3 1491.1h0M2925.2 1491.1h0M2929 1491.1h0M2932.9 1491.1h0" fill="none" stroke="#53b6e1" stroke-width="8.8" stroke-linecap="round"/></g>
<g clip-path="url(#c1)"><path d="M1016.7 367L1020.5 367L1024.4 376.4L1028.2 367L1032.1 387.4L1035.9 367L1039.7 370.1L1043.6 367L1047.4 367L1051.3 367L1055.1 367L1058.9 378L1062.8 367L1066.6 367L1070.5 370.3L1074.3 367L1078.1 375.7L1082 367L1085.8 367M1093.5 371.6L1097.3 367L1101.2 367L1105 367L1108.9 391L1112.7 367L1116.5 367L1120.4 367L1124.2 433.1L1128.1 367L1131.9 367L1135.7 367L1139.6 367L1143.4 367L1147.3 367L1151.1 367L1154.9 367L1158.8 371.6L1162.6 367L1166.5 397.4L1170.3 367L1174.1 367L1178 367L1181.8 367L1185.7 380L1189.5 409.1L1193.3 367L1197.2 367L1201 370.8L1204.9 370.8L1208.7 370.8L1212.5 367L1216.4 374.9L1220.2 367L1224.1 367M1231.7 367L1235.6 367L1239.4 367L1243.3 373.6L1247.1 367L1250.9 367L1254.8 367L1258.6 372.1L1262.5 367L1266.3 367L1270.1 374.9L1274 367L1277.8 367L1281.7 367L1285.5 399.9L1289.3 367L1293.2 367L1297 367L1300.9 373.9L1304.7 373.9L1308.5 367L1312.4 391.5L1316.2 367L1320.1 413.9L1323.9 367L1327.7 394.6L1331.6 367L1335.4 367L1339.3 367L1343.1 367L1346.9 375.9L1350.8 367L1354.6 367L1358.5 367L1362.3 370.3L1366.1 367L1370 367L1373.8 367L1377.7 367L1381.5 367L1385.3 367L1389.2 371.6L1393 367L1396.9 367L1400.7 367L1404.5 367M1412.2 367L1416.1 386.4L1419.9 367L1423.7 367L1427.6 367L1431.4 372.9L1435.3 367L1439.1 367L1442.9 367L1446.8 381.3L1450.6 367L1454.5 367L1458.3 367L1462.1 372.9L1466 367L1469.8 367L1473.7 382.1L1477.5 397.4L1481.3 367L1485.2 367L1489 367L1492.9 367L1496.7 377.5L1500.5 367L1504.4 367L1508.2 373.6L1512.1 367L1515.9 367L1519.7 426.4L1523.6 367L1527.4 367L1531.3 387.4L1535.1 367L1538.9 367L1542.8 367L1546.6 367L1550.5 367L1554.3 373.9L1558.1 622.1L1562 367L1565.8 420.8L1569.7 367L1573.5 367L1577.3 367L1581.2 379L1585 381.3L1588.9 367L1592.7 367L1596.5 377.2L1600.4 371.1L1604.2 393.8L1608.1 387.9L1611.9 367L1615.7 367L1619.6 381.3L1623.4 367L1627.3 367L1631.1 367L1634.9 367L1638.8 367L1642.6 367L1646.5 367L1650.3 367L1654.1 367M1661.8 416.2L1665.7 367L1669.5 367L1673.3 367L1677.2 367L1681 367L1684.9 367L1688.7 367L1692.5 367L1696.4 367L1700.2 367L1704.1 374.9L1707.9 367L1711.7 375.9L1715.6 367L1719.4 385.4L1723.3 367L1727.1 367L1730.9 367L1734.8 367L1738.6 367L1742.5 382.6L1746.3 367L1750.1 399.4L1754 367L1757.8 367L1761.7 367L1765.5 374.9L1769.3 367L1773.2 416.2L1777 367L1780.9 367L1784.7 367L1788.5 375.9L1792.4 397.6L1796.2 367L1800.1 367L1803.9 404.8L1807.7 367M1815.4 367L1819.3 367L1823.1 367L1826.9 390L1830.8 367L1834.6 367L1838.5 367L1842.3 367L1846.1 367L1850 367L1853.8 370.3L1857.7 367L1861.5 367L1865.3 367L1869.2 367L1873 381.3L1876.9 367L1880.7 367L1884.5 372.9L1888.4 367L1892.2 375.9L1896.1 367L1899.9 367L1903.7 367L1907.6 367L1911.4 374.4L1915.3 367L1919.1 367L1922.9 388.9L1926.8 367L1930.6 367L1934.5 375.9L1938.3 367L1942.1 367L1946 367L1949.8 367L1953.7 367L1957.5 367L1961.3 385.6L1965.2 382.1L1969 367L1972.9 381L1976.7 378L1980.5 367L1984.4 367L1988.2 367L1992.1 367L1995.9 393L1999.7 367L2003.6 367L2007.4 367L2011.3 437.7L2015.1 367L2018.9 367L2022.8 383.8L2026.6 367L2030.5 367L2034.3 367L2038.1 367L2042 375.7L2045.8 367L2049.7 367L2053.5 367L2057.3 367L2061.2 367L2065 376.9L2068.9 367L2072.7 374.4L2076.5 367L2080.4 367L2084.2 382.6L2088.1 367L2091.9 374.9L2095.7 367L2099.6 367L2103.4 367L2107.3 367L2111.1 399.9L2114.9 405.8L2118.8 367L2122.6 367L2126.5 367L2130.3 367L2134.1 385.9L2138 367L2141.8 419.8L2145.7 390L2149.5 381L2153.3 382.6L2157.2 372.9L2161 367L2164.9 367L2168.7 374.9L2172.5 367L2176.4 367L2180.2 380.3L2184.1 367L2187.9 367L2191.7 367L2195.6 367L2199.4 367L2203.3 367L2207.1 367L2210.9 367L2214.8 367L2218.6 367L2222.5 367L2226.3 376.4L2230.1 367L2234 367L2237.8 367L2241.7 367L2245.5 382.8L2249.3 367L2253.2 367L2257 367M2264.7 367L2268.5 462.7L2272.4 367L2276.2 367L2280.1 370.3L2283.9 367L2287.7 367L2291.6 367L2295.4 367L2299.3 367L2303.1 367L2306.9 367L2310.8 367L2314.6 367L2318.5 395.8L2322.3 379L2326.1 367L2330 367L2333.8 367L2337.7 367L2341.5 367L2345.3 367L2349.2 367L2353 387.4L2356.9 373.9L2360.7 367L2364.5 393.8L2368.4 367L2372.2 367L2376.1 367L2379.9 367L2383.7 367L2387.6 367L2391.4 367L2395.3 367L2399.1 390M2406.8 371.1L2410.6 367L2414.5 417.3L2418.3 446.6L2422.1 381L2426 386.9M2433.7 372.1L2437.5 388.9L2441.3 367L2445.2 367L2449 382.8L2452.9 367L2456.7 367L2460.5 381L2464.4 375.9L2468.2 367L2472.1 367L2475.9 372.1L2479.7 367L2483.6 367L2487.4 462.2L2491.3 367L2495.1 367L2498.9 382.1L2502.8 367L2506.6 367L2510.5 367L2514.3 378.5L2518.1 367L2522 376.4L2525.8 367L2529.7 397.4L2533.5 370.3L2537.3 370.3L2541.2 423.1L2545 388.9L2548.9 372.1L2552.7 367L2556.5 367L2560.4 367L2564.2 367L2568.1 367L2571.9 367L2575.7 436.6L2579.6 372.1M2587.3 367L2591.1 434.3L2594.9 542L2598.8 367L2602.6 367L2606.5 367L2610.3 367L2614.1 367L2618 370.3L2621.8 367L2625.7 367L2629.5 382.1L2633.3 548.9L2637.2 396.3L2641 396.3L2644.9 367L2648.7 367L2652.5 367L2656.4 367M2664.1 372.1L2667.9 367L2671.7 367L2675.6 367L2679.4 367M2690.9 372.4L2694.8 367L2698.6 367L2702.5 392.3M2714 367L2717.8 367L2721.7 367L2725.5 370.3L2729.3 367L2733.2 384.9L2737 367L2740.9 413.4L2744.7 367L2748.5 367M2756.2 367L2760.1 367L2763.9 367M2771.6 367L2775.4 432.1L2779.3 374.7L2783.1 399.9L2786.9 367L2790.8 367L2794.6 367L2798.5 367L2802.3 367L2806.1 367L2810 367L2813.8 381L2817.7 437.4L2821.5 367L2825.3 367M2833 367L2836.9 367M2856.1 367L2859.9 376.4L2863.7 367L2867.6 367M2886.8 379h0" fill="none" stroke="#002b66" stroke-width="3.9" stroke-linejoin="round" stroke-linecap="round"/><path d="M1016.7 367h0M1020.5 367h0M1024.4 376.4h0M1028.2 367h0M1032.1 387.4h0M1035.9 367h0M1039.7 370.1h0M1043.6 367h0M1047.4 367h0M1051.3 367h0M1055.1 367h0M1058.9 378h0M1062.8 367h0M1066.6 367h0M1070.5 370.3h0M1074.3 367h0M1078.1 375.7h0M1082 367h0M1085.8 367h0M1093.5 371.6h0M1097.3 367h0M1101.2 367h0M1105 367h0M1108.9 391h0M1112.7 367h0M1116.5 367h0M1120.4 367h0M1124.2 433.1h0M1128.1 367h0M1131.9 367h0M1135.7 367h0M1139.6 367h0M1143.4 367h0M1147.3 367h0M1151.1 367h0M1154.9 367h0M1158.8 371.6h0M1162.6 367h0M1166.5 397.4h0M1170.3 367h0M1174.1 367h0M1178 367h0M1181.8 367h0M1185.7 380h0M1189.5 409.1h0M1193.3 367h0M1197.2 367h0M1201 370.8h0M1204.9 370.8h0M1208.7 370.8h0M1212.5 367h0M1216.4 374.9h0M1220.2 367h0M1224.1 367h0M1231.7 367h0M1235.6 367h0M1239.4 367h0M1243.3 373.6h0M1247.1 367h0M1250.9 367h0M1254.8 367h0M1258.6 372.1h0M1262.5 367h0M1266.3 367h0M1270.1 374.9h0M1274 367h0M1277.8 367h0M1281.7 367h0M1285.5 399.9h0M1289.3 367h0M1293.2 367h0M1297 367h0M1300.9 373.9h0M1304.7 373.9h0M1308.5 367h0M1312.4 391.5h0M1316.2 367h0M1320.1 413.9h0M1323.9 367h0M1327.7 394.6h0M1331.6 367h0M1335.4 367h0M1339.3 367h0M1343.1 367h0M1346.9 375.9h0M1350.8 367h0M1354.6 367h0M1358.5 367h0M1362.3 370.3h0M1366.1 367h0M1370 367h0M1373.8 367h0M1377.7 367h0M1381.5 367h0M1385.3 367h0M1389.2 371.6h0M1393 367h0M1396.9 367h0M1400.7 367h0M1404.5 367h0M1412.2 367h0M1416.1 386.4h0M1419.9 367h0M1423.7 367h0M1427.6 367h0M1431.4 372.9h0M1435.3 367h0M1439.1 367h0M1442.9 367h0M1446.8 381.3h0M1450.6 367h0M1454.5 367h0M1458.3 367h0M1462.1 372.9h0M1466 367h0M1469.8 367h0M1473.7 382.1h0M1477.5 397.4h0M1481.3 367h0M1485.2 367h0M1489 367h0M1492.9 367h0M1496.7 377.5h0M1500.5 367h0M1504.4 367h0M1508.2 373.6h0M1512.1 367h0M1515.9 367h0M1519.7 426.4h0M1523.6 367h0M1527.4 367h0M1531.3 387.4h0M1535.1 367h0M1538.9 367h0M1542.8 367h0M1546.6 367h0M1550.5 367h0M1554.3 373.9h0M1558.1 622.1h0M1562 367h0M1565.8 420.8h0M1569.7 367h0M1573.5 367h0M1577.3 367h0M1581.2 379h0M1585 381.3h0M1588.9 367h0M1592.7 367h0M1596.5 377.2h0M1600.4 371.1h0M1604.2 393.8h0M1608.1 387.9h0M1611.9 367h0M1615.7 367h0M1619.6 381.3h0M1623.4 367h0M1627.3 367h0M1631.1 367h0M1634.9 367h0M1638.8 367h0M1642.6 367h0M1646.5 367h0M1650.3 367h0M1654.1 367h0M1661.8 416.2h0M1665.7 367h0M1669.5 367h0M1673.3 367h0M1677.2 367h0M1681 367h0M1684.9 367h0M1688.7 367h0M1692.5 367h0M1696.4 367h0M1700.2 367h0M1704.1 374.9h0M1707.9 367h0M1711.7 375.9h0M1715.6 367h0M1719.4 385.4h0M1723.3 367h0M1727.1 367h0M1730.9 367h0M1734.8 367h0M1738.6 367h0M1742.5 382.6h0M1746.3 367h0M1750.1 399.4h0M1754 367h0M1757.8 367h0M1761.7 367h0M1765.5 374.9h0M1769.3 367h0M1773.2 416.2h0M1777 367h0M1780.9 367h0M1784.7 367h0M1788.5 375.9h0M1792.4 397.6h0M1796.2 367h0M1800.1 367h0M1803.9 404.8h0M1807.7 367h0M1815.4 367h0M1819.3 367h0M1823.1 367h0M1826.9 390h0M1830.8 367h0M1834.6 367h0M1838.5 367h0M1842.3 367h0M1846.1 367h0M1850 367h0M1853.8 370.3h0M1857.7 367h0M1861.5 367h0M1865.3 367h0M1869.2 367h0M1873 381.3h0M1876.9 367h0M1880.7 367h0M1884.5 372.9h0M1888.4 367h0M1892.2 375.9h0M1896.1 367h0M1899.9 367h0M1903.7 367h0M1907.6 367h0M1911.4 374.4h0M1915.3 367h0M1919.1 367h0M1922.9 388.9h0M1926.8 367h0M1930.6 367h0M1934.5 375.9h0M1938.3 367h0M1942.1 367h0M1946 367h0M1949.8 367h0M1953.7 367h0M1957.5 367h0M1961.3 385.6h0M1965.2 382.1h0M1969 367h0M1972.9 381h0M1976.7 378h0M1980.5 367h0M1984.4 367h0M1988.2 367h0M1992.1 367h0M1995.9 393h0M1999.7 367h0M2003.6 367h0M2007.4 367h0M2011.3 437.7h0M2015.1 367h0M2018.9 367h0M2022.8 383.8h0M2026.6 367h0M2030.5 367h0M2034.3 367h0M2038.1 367h0M2042 375.7h0M2045.8 367h0M2049.7 367h0M2053.5 367h0M2057.3 367h0M2061.2 367h0M2065 376.9h0M2068.9 367h0M2072.7 374.4h0M2076.5 367h0M2080.4 367h0M2084.2 382.6h0M2088.1 367h0M2091.9 374.9h0M2095.7 367h0M2099.6 367h0M2103.4 367h0M2107.3 367h0M2111.1 399.9h0M2114.9 405.8h0M2118.8 367h0M2122.6 367h0M2126.5 367h0M2130.3 367h0M2134.1 385.9h0M2138 367h0M2141.8 419.8h0M2145.7 390h0M2149.5 381h0M2153.3 382.6h0M2157.2 372.9h0M2161 367h0M2164.9 367h0M2168.7 374.9h0M2172.5 367h0M2176.4 367h0M2180.2 380.3h0M2184.1 367h0M2187.9 367h0M2191.7 367h0M2195.6 367h0M2199.4 367h0M2203.3 367h0M2207.1 367h0M2210.9 367h0M2214.8 367h0M2218.6 367h0M2222.5 367h0M2226.3 376.4h0M2230.1 367h0M2234 367h0M2237.8 367h0M2241.7 367h0M2245.5 382.8h0M2249.3 367h0M2253.2 367h0M2257 367h0M2264.7 367h0M2268.5 462.7h0M2272.4 367h0M2276.2 367h0M2280.1 370.3h0M2283.9 367h0M2287.7 367h0M2291.6 367h0M2295.4 367h0M2299.3 367h0M2303.1 367h0M2306.9 367h0M2310.8 367h0M2314.6 367h0M2318.5 395.8h0M2322.3 379h0M2326.1 367h0M2330 367h0M2333.8 367h0M2337.7 367h0M2341.5 367h0M2345.3 367h0M2349.2 367h0M2353 387.4h0M2356.9 373.9h0M2360.7 367h0M2364.5 393.8h0M2368.4 367h0M2372.2 367h0M2376.1 367h0M2379.9 367h0M2383.7 367h0M2387.6 367h0M2391.4 367h0M2395.3 367h0M2399.1 390h0M2406.8 371.1h0M2410.6 367h0M2414.5 417.3h0M2418.3 446.6h0M2422.1 381h0M2426 386.9h0M2433.7 372.1h0M2437.5 388.9h0M2441.3 367h0M2445.2 367h0M2449 382.8h0M2452.9 367h0M2456.7 367h0M2460.5 381h0M2464.4 375.9h0M2468.2 367h0M2472.1 367h0M2475.9 372.1h0M2479.7 367h0M2483.6 367h0M2487.4 462.2h0M2491.3 367h0M2495.1 367h0M2498.9 382.1h0M2502.8 367h0M2506.6 367h0M2510.5 367h0M2514.3 378.5h0M2518.1 367h0M2522 376.4h0M2525.8 367h0M2529.7 397.4h0M2533.5 370.3h0M2537.3 370.3h0M2541.2 423.1h0M2545 388.9h0M2548.9 372.1h0M2552.7 367h0M2556.5 367h0M2560.4 367h0M2564.2 367h0M2568.1 367h0M2571.9 367h0M2575.7 436.6h0M2579.6 372.1h0M2587.3 367h0M2591.1 434.3h0M2594.9 542h0M2598.8 367h0M2602.6 367h0M2606.5 367h0M2610.3 367h0M2614.1 367h0M2618 370.3h0M2621.8 367h0M2625.7 367h0M2629.5 382.1h0M2633.3 548.9h0M2637.2 396.3h0M2641 396.3h0M2644.9 367h0M2648.7 367h0M2652.5 367h0M2656.4 367h0M2664.1 372.1h0M2667.9 367h0M2671.7 367h0M2675.6 367h0M2679.4 367h0M2690.9 372.4h0M2694.8 367h0M2698.6 367h0M2702.5 392.3h0M2714 367h0M2717.8 367h0M2721.7 367h0M2725.5 370.3h0M2729.3 367h0M2733.2 384.9h0M2737 367h0M2740.9 413.4h0M2744.7 367h0M2748.5 367h0M2756.2 367h0M2760.1 367h0M2763.9 367h0M2771.6 367h0M2775.4 432.1h0M2779.3 374.7h0M2783.1 399.9h0M2786.9 367h0M2790.8 367h0M2794.6 367h0M2798.5 367h0M2802.3 367h0M2806.1 367h0M2810 367h0M2813.8 381h0M2817.7 437.4h0M2821.5 367h0M2825.3 367h0M2833 367h0M2836.9 367h0M2856.1 367h0M2859.9 376.4h0M2863.7 367h0M2867.6 367h0M2886.8 379h0" fill="none" stroke="#002b66" stroke-width="8.8" stroke-linecap="round"/>
<path d="M1089.7 622.1h0M1227.9 622.1h0M1408.4 622.1h0M1658 622.1h0M1811.6 622.1h0M2260.9 622.1h0M2402.9 622.1h0M2429.8 622.1h0M2583.4 622.1h0M2660.2 622.1h0M2683.3 622.1h0M2687.1 622.1h0M2706.3 622.1h0M2710.1 622.1h0M2752.4 622.1h0M2767.7 622.1h0M2829.2 622.1h0M2840.7 622.1h0M2844.5 622.1h0M2848.4 622.1h0M2852.2 622.1h0M2871.4 622.1h0M2875.3 622.1h0M2879.1 622.1h0M2882.9 622.1h0M2890.6 622.1h0M2894.5 622.1h0M2898.3 622.1h0M2902.1 622.1h0M2906 622.1h0M2909.8 622.1h0M2913.7 622.1h0M2917.5 622.1h0M2921.3 622.1h0M2925.2 622.1h0M2929 622.1h0M2932.9 622.1h0" fill="none" stroke="#6e0b27" stroke-width="9.2" stroke-linecap="round"/></g>
<path d="M1016.7 370.1L2932.4 379.0" stroke="#b533b5" stroke-width="3.700" stroke-dasharray="16.2 16.25" fill="none"/>
<path d="M1016.7 899.3L2932.4 893.5" stroke="#b533b5" stroke-width="3.700" stroke-dasharray="16.2 16.25" fill="none"/>
<path d="M1016.7 948.0L2932.4 951.2" stroke="#b533b5" stroke-width="3.700" stroke-dasharray="16.2 16.25" fill="none"/>
<path d="M1016.7 1264.6L2932.4 1257.7" stroke="#b533b5" stroke-width="3.700" stroke-dasharray="16.2 16.25" fill="none"/>
</svg>
</body></html>
